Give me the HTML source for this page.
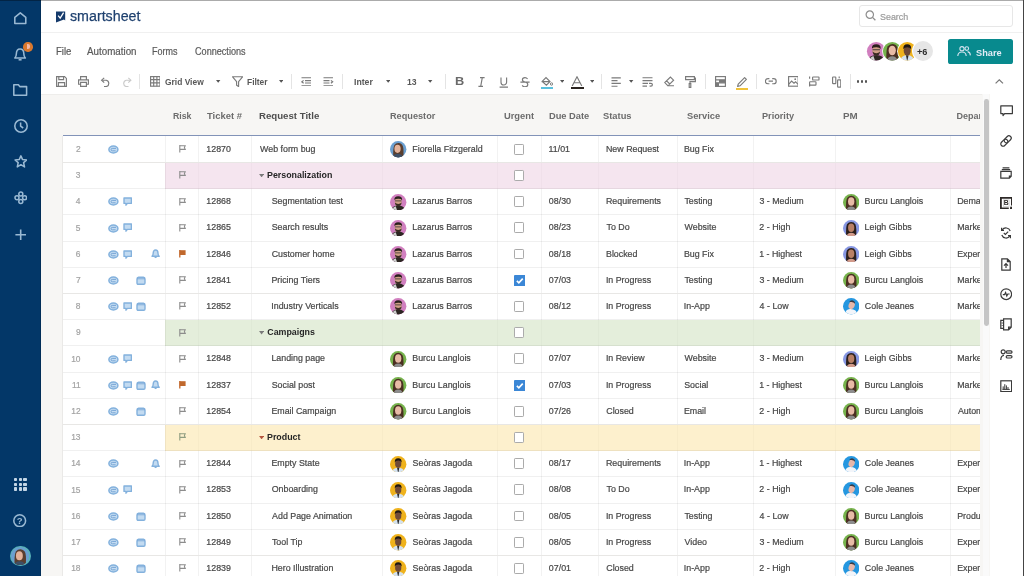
<!DOCTYPE html><html><head><meta charset="utf-8"><title>Smartsheet - Request Tracker</title><style>
html,body{margin:0;padding:0;width:1024px;height:576px;overflow:hidden;background:#fff;font-family:"Liberation Sans", sans-serif;}
.abs{position:absolute}
</style></head><body>
<div style="position:relative;width:1024px;height:576px;overflow:hidden;filter:blur(0.3px)">
<div class="abs" style="left:41px;top:94px;width:983px;height:482px;background:#f7f6f4"></div>
<div class="abs" style="left:41px;top:93.6px;width:941px;height:1.6px;background:#eeedeb"></div>
<div style="position:absolute;left:172.73px;top:111.08px;font-size:9.0px;line-height:10.80px;color:#6c6c6c;font-weight:bold;white-space:nowrap;transform:scaleX(0.9726);transform-origin:0 0;">Risk</div>
<div style="position:absolute;left:206.91px;top:111.08px;font-size:9.0px;line-height:10.80px;color:#6c6c6c;font-weight:bold;white-space:nowrap;transform:scaleX(1.0477);transform-origin:0 0;">Ticket #</div>
<div style="position:absolute;left:259.07px;top:111.08px;font-size:9.0px;line-height:10.80px;color:#4f4f4f;font-weight:bold;white-space:nowrap;transform:scaleX(1.0714);transform-origin:0 0;">Request Title</div>
<div style="position:absolute;left:390.10px;top:111.08px;font-size:9.0px;line-height:10.80px;color:#6c6c6c;font-weight:bold;white-space:nowrap;transform:scaleX(1.0186);transform-origin:0 0;">Requestor</div>
<div style="position:absolute;left:504.34px;top:111.08px;font-size:9.0px;line-height:10.80px;color:#6c6c6c;font-weight:bold;white-space:nowrap;transform:scaleX(1.0370);transform-origin:0 0;">Urgent</div>
<div style="position:absolute;left:548.70px;top:111.08px;font-size:9.0px;line-height:10.80px;color:#6c6c6c;font-weight:bold;white-space:nowrap;transform:scaleX(1.0311);transform-origin:0 0;">Due Date</div>
<div style="position:absolute;left:603.12px;top:111.08px;font-size:9.0px;line-height:10.80px;color:#6c6c6c;font-weight:bold;white-space:nowrap;transform:scaleX(1.0385);transform-origin:0 0;">Status</div>
<div style="position:absolute;left:686.52px;top:111.08px;font-size:9.0px;line-height:10.80px;color:#6c6c6c;font-weight:bold;white-space:nowrap;transform:scaleX(1.0332);transform-origin:0 0;">Service</div>
<div style="position:absolute;left:761.80px;top:111.08px;font-size:9.0px;line-height:10.80px;color:#6c6c6c;font-weight:bold;white-space:nowrap;transform:scaleX(1.0172);transform-origin:0 0;">Priority</div>
<div style="position:absolute;left:843.36px;top:111.08px;font-size:9.0px;line-height:10.80px;color:#6c6c6c;font-weight:bold;white-space:nowrap;transform:scaleX(1.0908);transform-origin:0 0;">PM</div>
<div class="abs" style="left:0;top:0;width:979.80px;height:576px;overflow:hidden">
<div style="position:absolute;left:956.62px;top:111.08px;font-size:9.0px;line-height:10.80px;color:#6c6c6c;font-weight:bold;white-space:nowrap;">Department</div>
<div class="abs" style="left:62.5px;top:134.7px;width:917.30px;height:1.6px;background:#8293b8"></div>
<div class="abs" style="left:62.5px;top:136.30px;width:917.30px;height:26.20px;background:#fff"></div>
<div class="abs" style="left:62.5px;top:162.50px;width:917.30px;height:26.20px;background:#fff"></div>
<div class="abs" style="left:165.20px;top:162.50px;width:814.60px;height:26.20px;background:#f5e5ef"></div>
<div class="abs" style="left:62.5px;top:188.70px;width:917.30px;height:26.20px;background:#fff"></div>
<div class="abs" style="left:62.5px;top:214.90px;width:917.30px;height:26.20px;background:#fff"></div>
<div class="abs" style="left:62.5px;top:241.10px;width:917.30px;height:26.20px;background:#fff"></div>
<div class="abs" style="left:62.5px;top:267.30px;width:917.30px;height:26.20px;background:#fff"></div>
<div class="abs" style="left:62.5px;top:293.50px;width:917.30px;height:26.20px;background:#fff"></div>
<div class="abs" style="left:62.5px;top:319.70px;width:917.30px;height:26.20px;background:#fff"></div>
<div class="abs" style="left:165.20px;top:319.70px;width:814.60px;height:26.20px;background:#e4eedb"></div>
<div class="abs" style="left:62.5px;top:345.90px;width:917.30px;height:26.20px;background:#fff"></div>
<div class="abs" style="left:62.5px;top:372.10px;width:917.30px;height:26.20px;background:#fff"></div>
<div class="abs" style="left:62.5px;top:398.30px;width:917.30px;height:26.20px;background:#fff"></div>
<div class="abs" style="left:62.5px;top:424.50px;width:917.30px;height:26.20px;background:#fff"></div>
<div class="abs" style="left:165.20px;top:424.50px;width:814.60px;height:26.20px;background:#fdf0cd"></div>
<div class="abs" style="left:62.5px;top:450.70px;width:917.30px;height:26.20px;background:#fff"></div>
<div class="abs" style="left:62.5px;top:476.90px;width:917.30px;height:26.20px;background:#fff"></div>
<div class="abs" style="left:62.5px;top:503.10px;width:917.30px;height:26.20px;background:#fff"></div>
<div class="abs" style="left:62.5px;top:529.30px;width:917.30px;height:26.20px;background:#fff"></div>
<div class="abs" style="left:62.5px;top:555.50px;width:917.30px;height:26.20px;background:#fff"></div>
<div class="abs" style="left:62.5px;top:162.00px;width:917.30px;height:1px;background:rgba(0,0,0,0.058)"></div>
<div class="abs" style="left:62.5px;top:188.20px;width:917.30px;height:1px;background:rgba(0,0,0,0.058)"></div>
<div class="abs" style="left:62.5px;top:214.40px;width:917.30px;height:1px;background:rgba(0,0,0,0.058)"></div>
<div class="abs" style="left:62.5px;top:240.60px;width:917.30px;height:1px;background:rgba(0,0,0,0.058)"></div>
<div class="abs" style="left:62.5px;top:266.80px;width:917.30px;height:1px;background:rgba(0,0,0,0.058)"></div>
<div class="abs" style="left:62.5px;top:293.00px;width:917.30px;height:1px;background:rgba(0,0,0,0.058)"></div>
<div class="abs" style="left:62.5px;top:319.20px;width:917.30px;height:1px;background:rgba(0,0,0,0.058)"></div>
<div class="abs" style="left:62.5px;top:345.40px;width:917.30px;height:1px;background:rgba(0,0,0,0.058)"></div>
<div class="abs" style="left:62.5px;top:371.60px;width:917.30px;height:1px;background:rgba(0,0,0,0.058)"></div>
<div class="abs" style="left:62.5px;top:397.80px;width:917.30px;height:1px;background:rgba(0,0,0,0.058)"></div>
<div class="abs" style="left:62.5px;top:424.00px;width:917.30px;height:1px;background:rgba(0,0,0,0.058)"></div>
<div class="abs" style="left:62.5px;top:450.20px;width:917.30px;height:1px;background:rgba(0,0,0,0.058)"></div>
<div class="abs" style="left:62.5px;top:476.40px;width:917.30px;height:1px;background:rgba(0,0,0,0.058)"></div>
<div class="abs" style="left:62.5px;top:502.60px;width:917.30px;height:1px;background:rgba(0,0,0,0.058)"></div>
<div class="abs" style="left:62.5px;top:528.80px;width:917.30px;height:1px;background:rgba(0,0,0,0.058)"></div>
<div class="abs" style="left:62.5px;top:555.00px;width:917.30px;height:1px;background:rgba(0,0,0,0.058)"></div>
<div class="abs" style="left:62.5px;top:581.20px;width:917.30px;height:1px;background:rgba(0,0,0,0.058)"></div>
<div class="abs" style="left:164.70px;top:136.30px;width:1px;height:26.20px;background:rgba(0,0,0,0.052)"></div>
<div class="abs" style="left:164.70px;top:162.50px;width:1px;height:26.20px;background:rgba(0,0,0,0.052)"></div>
<div class="abs" style="left:164.70px;top:188.70px;width:1px;height:26.20px;background:rgba(0,0,0,0.052)"></div>
<div class="abs" style="left:164.70px;top:214.90px;width:1px;height:26.20px;background:rgba(0,0,0,0.052)"></div>
<div class="abs" style="left:164.70px;top:241.10px;width:1px;height:26.20px;background:rgba(0,0,0,0.052)"></div>
<div class="abs" style="left:164.70px;top:267.30px;width:1px;height:26.20px;background:rgba(0,0,0,0.052)"></div>
<div class="abs" style="left:164.70px;top:293.50px;width:1px;height:26.20px;background:rgba(0,0,0,0.052)"></div>
<div class="abs" style="left:164.70px;top:319.70px;width:1px;height:26.20px;background:rgba(0,0,0,0.052)"></div>
<div class="abs" style="left:164.70px;top:345.90px;width:1px;height:26.20px;background:rgba(0,0,0,0.052)"></div>
<div class="abs" style="left:164.70px;top:372.10px;width:1px;height:26.20px;background:rgba(0,0,0,0.052)"></div>
<div class="abs" style="left:164.70px;top:398.30px;width:1px;height:26.20px;background:rgba(0,0,0,0.052)"></div>
<div class="abs" style="left:164.70px;top:424.50px;width:1px;height:26.20px;background:rgba(0,0,0,0.052)"></div>
<div class="abs" style="left:164.70px;top:450.70px;width:1px;height:26.20px;background:rgba(0,0,0,0.052)"></div>
<div class="abs" style="left:164.70px;top:476.90px;width:1px;height:26.20px;background:rgba(0,0,0,0.052)"></div>
<div class="abs" style="left:164.70px;top:503.10px;width:1px;height:26.20px;background:rgba(0,0,0,0.052)"></div>
<div class="abs" style="left:164.70px;top:529.30px;width:1px;height:26.20px;background:rgba(0,0,0,0.052)"></div>
<div class="abs" style="left:164.70px;top:555.50px;width:1px;height:26.20px;background:rgba(0,0,0,0.052)"></div>
<div class="abs" style="left:198.10px;top:136.30px;width:1px;height:26.20px;background:rgba(0,0,0,0.052)"></div>
<div class="abs" style="left:198.10px;top:162.50px;width:1px;height:26.20px;background:rgba(0,0,0,0.018)"></div>
<div class="abs" style="left:198.10px;top:188.70px;width:1px;height:26.20px;background:rgba(0,0,0,0.052)"></div>
<div class="abs" style="left:198.10px;top:214.90px;width:1px;height:26.20px;background:rgba(0,0,0,0.052)"></div>
<div class="abs" style="left:198.10px;top:241.10px;width:1px;height:26.20px;background:rgba(0,0,0,0.052)"></div>
<div class="abs" style="left:198.10px;top:267.30px;width:1px;height:26.20px;background:rgba(0,0,0,0.052)"></div>
<div class="abs" style="left:198.10px;top:293.50px;width:1px;height:26.20px;background:rgba(0,0,0,0.052)"></div>
<div class="abs" style="left:198.10px;top:319.70px;width:1px;height:26.20px;background:rgba(0,0,0,0.018)"></div>
<div class="abs" style="left:198.10px;top:345.90px;width:1px;height:26.20px;background:rgba(0,0,0,0.052)"></div>
<div class="abs" style="left:198.10px;top:372.10px;width:1px;height:26.20px;background:rgba(0,0,0,0.052)"></div>
<div class="abs" style="left:198.10px;top:398.30px;width:1px;height:26.20px;background:rgba(0,0,0,0.052)"></div>
<div class="abs" style="left:198.10px;top:424.50px;width:1px;height:26.20px;background:rgba(0,0,0,0.018)"></div>
<div class="abs" style="left:198.10px;top:450.70px;width:1px;height:26.20px;background:rgba(0,0,0,0.052)"></div>
<div class="abs" style="left:198.10px;top:476.90px;width:1px;height:26.20px;background:rgba(0,0,0,0.052)"></div>
<div class="abs" style="left:198.10px;top:503.10px;width:1px;height:26.20px;background:rgba(0,0,0,0.052)"></div>
<div class="abs" style="left:198.10px;top:529.30px;width:1px;height:26.20px;background:rgba(0,0,0,0.052)"></div>
<div class="abs" style="left:198.10px;top:555.50px;width:1px;height:26.20px;background:rgba(0,0,0,0.052)"></div>
<div class="abs" style="left:250.50px;top:136.30px;width:1px;height:26.20px;background:rgba(0,0,0,0.052)"></div>
<div class="abs" style="left:250.50px;top:162.50px;width:1px;height:26.20px;background:rgba(0,0,0,0.018)"></div>
<div class="abs" style="left:250.50px;top:188.70px;width:1px;height:26.20px;background:rgba(0,0,0,0.052)"></div>
<div class="abs" style="left:250.50px;top:214.90px;width:1px;height:26.20px;background:rgba(0,0,0,0.052)"></div>
<div class="abs" style="left:250.50px;top:241.10px;width:1px;height:26.20px;background:rgba(0,0,0,0.052)"></div>
<div class="abs" style="left:250.50px;top:267.30px;width:1px;height:26.20px;background:rgba(0,0,0,0.052)"></div>
<div class="abs" style="left:250.50px;top:293.50px;width:1px;height:26.20px;background:rgba(0,0,0,0.052)"></div>
<div class="abs" style="left:250.50px;top:319.70px;width:1px;height:26.20px;background:rgba(0,0,0,0.018)"></div>
<div class="abs" style="left:250.50px;top:345.90px;width:1px;height:26.20px;background:rgba(0,0,0,0.052)"></div>
<div class="abs" style="left:250.50px;top:372.10px;width:1px;height:26.20px;background:rgba(0,0,0,0.052)"></div>
<div class="abs" style="left:250.50px;top:398.30px;width:1px;height:26.20px;background:rgba(0,0,0,0.052)"></div>
<div class="abs" style="left:250.50px;top:424.50px;width:1px;height:26.20px;background:rgba(0,0,0,0.018)"></div>
<div class="abs" style="left:250.50px;top:450.70px;width:1px;height:26.20px;background:rgba(0,0,0,0.052)"></div>
<div class="abs" style="left:250.50px;top:476.90px;width:1px;height:26.20px;background:rgba(0,0,0,0.052)"></div>
<div class="abs" style="left:250.50px;top:503.10px;width:1px;height:26.20px;background:rgba(0,0,0,0.052)"></div>
<div class="abs" style="left:250.50px;top:529.30px;width:1px;height:26.20px;background:rgba(0,0,0,0.052)"></div>
<div class="abs" style="left:250.50px;top:555.50px;width:1px;height:26.20px;background:rgba(0,0,0,0.052)"></div>
<div class="abs" style="left:382.20px;top:136.30px;width:1px;height:26.20px;background:rgba(0,0,0,0.052)"></div>
<div class="abs" style="left:382.20px;top:162.50px;width:1px;height:26.20px;background:rgba(0,0,0,0.018)"></div>
<div class="abs" style="left:382.20px;top:188.70px;width:1px;height:26.20px;background:rgba(0,0,0,0.052)"></div>
<div class="abs" style="left:382.20px;top:214.90px;width:1px;height:26.20px;background:rgba(0,0,0,0.052)"></div>
<div class="abs" style="left:382.20px;top:241.10px;width:1px;height:26.20px;background:rgba(0,0,0,0.052)"></div>
<div class="abs" style="left:382.20px;top:267.30px;width:1px;height:26.20px;background:rgba(0,0,0,0.052)"></div>
<div class="abs" style="left:382.20px;top:293.50px;width:1px;height:26.20px;background:rgba(0,0,0,0.052)"></div>
<div class="abs" style="left:382.20px;top:319.70px;width:1px;height:26.20px;background:rgba(0,0,0,0.018)"></div>
<div class="abs" style="left:382.20px;top:345.90px;width:1px;height:26.20px;background:rgba(0,0,0,0.052)"></div>
<div class="abs" style="left:382.20px;top:372.10px;width:1px;height:26.20px;background:rgba(0,0,0,0.052)"></div>
<div class="abs" style="left:382.20px;top:398.30px;width:1px;height:26.20px;background:rgba(0,0,0,0.052)"></div>
<div class="abs" style="left:382.20px;top:424.50px;width:1px;height:26.20px;background:rgba(0,0,0,0.018)"></div>
<div class="abs" style="left:382.20px;top:450.70px;width:1px;height:26.20px;background:rgba(0,0,0,0.052)"></div>
<div class="abs" style="left:382.20px;top:476.90px;width:1px;height:26.20px;background:rgba(0,0,0,0.052)"></div>
<div class="abs" style="left:382.20px;top:503.10px;width:1px;height:26.20px;background:rgba(0,0,0,0.052)"></div>
<div class="abs" style="left:382.20px;top:529.30px;width:1px;height:26.20px;background:rgba(0,0,0,0.052)"></div>
<div class="abs" style="left:382.20px;top:555.50px;width:1px;height:26.20px;background:rgba(0,0,0,0.052)"></div>
<div class="abs" style="left:496.60px;top:136.30px;width:1px;height:26.20px;background:rgba(0,0,0,0.052)"></div>
<div class="abs" style="left:496.60px;top:162.50px;width:1px;height:26.20px;background:rgba(0,0,0,0.018)"></div>
<div class="abs" style="left:496.60px;top:188.70px;width:1px;height:26.20px;background:rgba(0,0,0,0.052)"></div>
<div class="abs" style="left:496.60px;top:214.90px;width:1px;height:26.20px;background:rgba(0,0,0,0.052)"></div>
<div class="abs" style="left:496.60px;top:241.10px;width:1px;height:26.20px;background:rgba(0,0,0,0.052)"></div>
<div class="abs" style="left:496.60px;top:267.30px;width:1px;height:26.20px;background:rgba(0,0,0,0.052)"></div>
<div class="abs" style="left:496.60px;top:293.50px;width:1px;height:26.20px;background:rgba(0,0,0,0.052)"></div>
<div class="abs" style="left:496.60px;top:319.70px;width:1px;height:26.20px;background:rgba(0,0,0,0.018)"></div>
<div class="abs" style="left:496.60px;top:345.90px;width:1px;height:26.20px;background:rgba(0,0,0,0.052)"></div>
<div class="abs" style="left:496.60px;top:372.10px;width:1px;height:26.20px;background:rgba(0,0,0,0.052)"></div>
<div class="abs" style="left:496.60px;top:398.30px;width:1px;height:26.20px;background:rgba(0,0,0,0.052)"></div>
<div class="abs" style="left:496.60px;top:424.50px;width:1px;height:26.20px;background:rgba(0,0,0,0.018)"></div>
<div class="abs" style="left:496.60px;top:450.70px;width:1px;height:26.20px;background:rgba(0,0,0,0.052)"></div>
<div class="abs" style="left:496.60px;top:476.90px;width:1px;height:26.20px;background:rgba(0,0,0,0.052)"></div>
<div class="abs" style="left:496.60px;top:503.10px;width:1px;height:26.20px;background:rgba(0,0,0,0.052)"></div>
<div class="abs" style="left:496.60px;top:529.30px;width:1px;height:26.20px;background:rgba(0,0,0,0.052)"></div>
<div class="abs" style="left:496.60px;top:555.50px;width:1px;height:26.20px;background:rgba(0,0,0,0.052)"></div>
<div class="abs" style="left:541.00px;top:136.30px;width:1px;height:26.20px;background:rgba(0,0,0,0.052)"></div>
<div class="abs" style="left:541.00px;top:162.50px;width:1px;height:26.20px;background:rgba(0,0,0,0.018)"></div>
<div class="abs" style="left:541.00px;top:188.70px;width:1px;height:26.20px;background:rgba(0,0,0,0.052)"></div>
<div class="abs" style="left:541.00px;top:214.90px;width:1px;height:26.20px;background:rgba(0,0,0,0.052)"></div>
<div class="abs" style="left:541.00px;top:241.10px;width:1px;height:26.20px;background:rgba(0,0,0,0.052)"></div>
<div class="abs" style="left:541.00px;top:267.30px;width:1px;height:26.20px;background:rgba(0,0,0,0.052)"></div>
<div class="abs" style="left:541.00px;top:293.50px;width:1px;height:26.20px;background:rgba(0,0,0,0.052)"></div>
<div class="abs" style="left:541.00px;top:319.70px;width:1px;height:26.20px;background:rgba(0,0,0,0.018)"></div>
<div class="abs" style="left:541.00px;top:345.90px;width:1px;height:26.20px;background:rgba(0,0,0,0.052)"></div>
<div class="abs" style="left:541.00px;top:372.10px;width:1px;height:26.20px;background:rgba(0,0,0,0.052)"></div>
<div class="abs" style="left:541.00px;top:398.30px;width:1px;height:26.20px;background:rgba(0,0,0,0.052)"></div>
<div class="abs" style="left:541.00px;top:424.50px;width:1px;height:26.20px;background:rgba(0,0,0,0.018)"></div>
<div class="abs" style="left:541.00px;top:450.70px;width:1px;height:26.20px;background:rgba(0,0,0,0.052)"></div>
<div class="abs" style="left:541.00px;top:476.90px;width:1px;height:26.20px;background:rgba(0,0,0,0.052)"></div>
<div class="abs" style="left:541.00px;top:503.10px;width:1px;height:26.20px;background:rgba(0,0,0,0.052)"></div>
<div class="abs" style="left:541.00px;top:529.30px;width:1px;height:26.20px;background:rgba(0,0,0,0.052)"></div>
<div class="abs" style="left:541.00px;top:555.50px;width:1px;height:26.20px;background:rgba(0,0,0,0.052)"></div>
<div class="abs" style="left:598.10px;top:136.30px;width:1px;height:26.20px;background:rgba(0,0,0,0.052)"></div>
<div class="abs" style="left:598.10px;top:162.50px;width:1px;height:26.20px;background:rgba(0,0,0,0.018)"></div>
<div class="abs" style="left:598.10px;top:188.70px;width:1px;height:26.20px;background:rgba(0,0,0,0.052)"></div>
<div class="abs" style="left:598.10px;top:214.90px;width:1px;height:26.20px;background:rgba(0,0,0,0.052)"></div>
<div class="abs" style="left:598.10px;top:241.10px;width:1px;height:26.20px;background:rgba(0,0,0,0.052)"></div>
<div class="abs" style="left:598.10px;top:267.30px;width:1px;height:26.20px;background:rgba(0,0,0,0.052)"></div>
<div class="abs" style="left:598.10px;top:293.50px;width:1px;height:26.20px;background:rgba(0,0,0,0.052)"></div>
<div class="abs" style="left:598.10px;top:319.70px;width:1px;height:26.20px;background:rgba(0,0,0,0.018)"></div>
<div class="abs" style="left:598.10px;top:345.90px;width:1px;height:26.20px;background:rgba(0,0,0,0.052)"></div>
<div class="abs" style="left:598.10px;top:372.10px;width:1px;height:26.20px;background:rgba(0,0,0,0.052)"></div>
<div class="abs" style="left:598.10px;top:398.30px;width:1px;height:26.20px;background:rgba(0,0,0,0.052)"></div>
<div class="abs" style="left:598.10px;top:424.50px;width:1px;height:26.20px;background:rgba(0,0,0,0.018)"></div>
<div class="abs" style="left:598.10px;top:450.70px;width:1px;height:26.20px;background:rgba(0,0,0,0.052)"></div>
<div class="abs" style="left:598.10px;top:476.90px;width:1px;height:26.20px;background:rgba(0,0,0,0.052)"></div>
<div class="abs" style="left:598.10px;top:503.10px;width:1px;height:26.20px;background:rgba(0,0,0,0.052)"></div>
<div class="abs" style="left:598.10px;top:529.30px;width:1px;height:26.20px;background:rgba(0,0,0,0.052)"></div>
<div class="abs" style="left:598.10px;top:555.50px;width:1px;height:26.20px;background:rgba(0,0,0,0.052)"></div>
<div class="abs" style="left:676.70px;top:136.30px;width:1px;height:26.20px;background:rgba(0,0,0,0.052)"></div>
<div class="abs" style="left:676.70px;top:162.50px;width:1px;height:26.20px;background:rgba(0,0,0,0.018)"></div>
<div class="abs" style="left:676.70px;top:188.70px;width:1px;height:26.20px;background:rgba(0,0,0,0.052)"></div>
<div class="abs" style="left:676.70px;top:214.90px;width:1px;height:26.20px;background:rgba(0,0,0,0.052)"></div>
<div class="abs" style="left:676.70px;top:241.10px;width:1px;height:26.20px;background:rgba(0,0,0,0.052)"></div>
<div class="abs" style="left:676.70px;top:267.30px;width:1px;height:26.20px;background:rgba(0,0,0,0.052)"></div>
<div class="abs" style="left:676.70px;top:293.50px;width:1px;height:26.20px;background:rgba(0,0,0,0.052)"></div>
<div class="abs" style="left:676.70px;top:319.70px;width:1px;height:26.20px;background:rgba(0,0,0,0.018)"></div>
<div class="abs" style="left:676.70px;top:345.90px;width:1px;height:26.20px;background:rgba(0,0,0,0.052)"></div>
<div class="abs" style="left:676.70px;top:372.10px;width:1px;height:26.20px;background:rgba(0,0,0,0.052)"></div>
<div class="abs" style="left:676.70px;top:398.30px;width:1px;height:26.20px;background:rgba(0,0,0,0.052)"></div>
<div class="abs" style="left:676.70px;top:424.50px;width:1px;height:26.20px;background:rgba(0,0,0,0.018)"></div>
<div class="abs" style="left:676.70px;top:450.70px;width:1px;height:26.20px;background:rgba(0,0,0,0.052)"></div>
<div class="abs" style="left:676.70px;top:476.90px;width:1px;height:26.20px;background:rgba(0,0,0,0.052)"></div>
<div class="abs" style="left:676.70px;top:503.10px;width:1px;height:26.20px;background:rgba(0,0,0,0.052)"></div>
<div class="abs" style="left:676.70px;top:529.30px;width:1px;height:26.20px;background:rgba(0,0,0,0.052)"></div>
<div class="abs" style="left:676.70px;top:555.50px;width:1px;height:26.20px;background:rgba(0,0,0,0.052)"></div>
<div class="abs" style="left:752.70px;top:136.30px;width:1px;height:26.20px;background:rgba(0,0,0,0.052)"></div>
<div class="abs" style="left:752.70px;top:162.50px;width:1px;height:26.20px;background:rgba(0,0,0,0.018)"></div>
<div class="abs" style="left:752.70px;top:188.70px;width:1px;height:26.20px;background:rgba(0,0,0,0.052)"></div>
<div class="abs" style="left:752.70px;top:214.90px;width:1px;height:26.20px;background:rgba(0,0,0,0.052)"></div>
<div class="abs" style="left:752.70px;top:241.10px;width:1px;height:26.20px;background:rgba(0,0,0,0.052)"></div>
<div class="abs" style="left:752.70px;top:267.30px;width:1px;height:26.20px;background:rgba(0,0,0,0.052)"></div>
<div class="abs" style="left:752.70px;top:293.50px;width:1px;height:26.20px;background:rgba(0,0,0,0.052)"></div>
<div class="abs" style="left:752.70px;top:319.70px;width:1px;height:26.20px;background:rgba(0,0,0,0.018)"></div>
<div class="abs" style="left:752.70px;top:345.90px;width:1px;height:26.20px;background:rgba(0,0,0,0.052)"></div>
<div class="abs" style="left:752.70px;top:372.10px;width:1px;height:26.20px;background:rgba(0,0,0,0.052)"></div>
<div class="abs" style="left:752.70px;top:398.30px;width:1px;height:26.20px;background:rgba(0,0,0,0.052)"></div>
<div class="abs" style="left:752.70px;top:424.50px;width:1px;height:26.20px;background:rgba(0,0,0,0.018)"></div>
<div class="abs" style="left:752.70px;top:450.70px;width:1px;height:26.20px;background:rgba(0,0,0,0.052)"></div>
<div class="abs" style="left:752.70px;top:476.90px;width:1px;height:26.20px;background:rgba(0,0,0,0.052)"></div>
<div class="abs" style="left:752.70px;top:503.10px;width:1px;height:26.20px;background:rgba(0,0,0,0.052)"></div>
<div class="abs" style="left:752.70px;top:529.30px;width:1px;height:26.20px;background:rgba(0,0,0,0.052)"></div>
<div class="abs" style="left:752.70px;top:555.50px;width:1px;height:26.20px;background:rgba(0,0,0,0.052)"></div>
<div class="abs" style="left:835.00px;top:136.30px;width:1px;height:26.20px;background:rgba(0,0,0,0.052)"></div>
<div class="abs" style="left:835.00px;top:162.50px;width:1px;height:26.20px;background:rgba(0,0,0,0.018)"></div>
<div class="abs" style="left:835.00px;top:188.70px;width:1px;height:26.20px;background:rgba(0,0,0,0.052)"></div>
<div class="abs" style="left:835.00px;top:214.90px;width:1px;height:26.20px;background:rgba(0,0,0,0.052)"></div>
<div class="abs" style="left:835.00px;top:241.10px;width:1px;height:26.20px;background:rgba(0,0,0,0.052)"></div>
<div class="abs" style="left:835.00px;top:267.30px;width:1px;height:26.20px;background:rgba(0,0,0,0.052)"></div>
<div class="abs" style="left:835.00px;top:293.50px;width:1px;height:26.20px;background:rgba(0,0,0,0.052)"></div>
<div class="abs" style="left:835.00px;top:319.70px;width:1px;height:26.20px;background:rgba(0,0,0,0.018)"></div>
<div class="abs" style="left:835.00px;top:345.90px;width:1px;height:26.20px;background:rgba(0,0,0,0.052)"></div>
<div class="abs" style="left:835.00px;top:372.10px;width:1px;height:26.20px;background:rgba(0,0,0,0.052)"></div>
<div class="abs" style="left:835.00px;top:398.30px;width:1px;height:26.20px;background:rgba(0,0,0,0.052)"></div>
<div class="abs" style="left:835.00px;top:424.50px;width:1px;height:26.20px;background:rgba(0,0,0,0.018)"></div>
<div class="abs" style="left:835.00px;top:450.70px;width:1px;height:26.20px;background:rgba(0,0,0,0.052)"></div>
<div class="abs" style="left:835.00px;top:476.90px;width:1px;height:26.20px;background:rgba(0,0,0,0.052)"></div>
<div class="abs" style="left:835.00px;top:503.10px;width:1px;height:26.20px;background:rgba(0,0,0,0.052)"></div>
<div class="abs" style="left:835.00px;top:529.30px;width:1px;height:26.20px;background:rgba(0,0,0,0.052)"></div>
<div class="abs" style="left:835.00px;top:555.50px;width:1px;height:26.20px;background:rgba(0,0,0,0.052)"></div>
<div class="abs" style="left:950.20px;top:136.30px;width:1px;height:26.20px;background:rgba(0,0,0,0.052)"></div>
<div class="abs" style="left:950.20px;top:162.50px;width:1px;height:26.20px;background:rgba(0,0,0,0.018)"></div>
<div class="abs" style="left:950.20px;top:188.70px;width:1px;height:26.20px;background:rgba(0,0,0,0.052)"></div>
<div class="abs" style="left:950.20px;top:214.90px;width:1px;height:26.20px;background:rgba(0,0,0,0.052)"></div>
<div class="abs" style="left:950.20px;top:241.10px;width:1px;height:26.20px;background:rgba(0,0,0,0.052)"></div>
<div class="abs" style="left:950.20px;top:267.30px;width:1px;height:26.20px;background:rgba(0,0,0,0.052)"></div>
<div class="abs" style="left:950.20px;top:293.50px;width:1px;height:26.20px;background:rgba(0,0,0,0.052)"></div>
<div class="abs" style="left:950.20px;top:319.70px;width:1px;height:26.20px;background:rgba(0,0,0,0.018)"></div>
<div class="abs" style="left:950.20px;top:345.90px;width:1px;height:26.20px;background:rgba(0,0,0,0.052)"></div>
<div class="abs" style="left:950.20px;top:372.10px;width:1px;height:26.20px;background:rgba(0,0,0,0.052)"></div>
<div class="abs" style="left:950.20px;top:398.30px;width:1px;height:26.20px;background:rgba(0,0,0,0.052)"></div>
<div class="abs" style="left:950.20px;top:424.50px;width:1px;height:26.20px;background:rgba(0,0,0,0.018)"></div>
<div class="abs" style="left:950.20px;top:450.70px;width:1px;height:26.20px;background:rgba(0,0,0,0.052)"></div>
<div class="abs" style="left:950.20px;top:476.90px;width:1px;height:26.20px;background:rgba(0,0,0,0.052)"></div>
<div class="abs" style="left:950.20px;top:503.10px;width:1px;height:26.20px;background:rgba(0,0,0,0.052)"></div>
<div class="abs" style="left:950.20px;top:529.30px;width:1px;height:26.20px;background:rgba(0,0,0,0.052)"></div>
<div class="abs" style="left:950.20px;top:555.50px;width:1px;height:26.20px;background:rgba(0,0,0,0.052)"></div>
<div class="abs" style="left:62.00px;top:136.30px;width:1px;height:439.70px;background:rgba(0,0,0,0.05)"></div>
<div style="position:absolute;left:75.96px;top:143.95px;font-size:8.4px;line-height:10.08px;color:#a3a3a3;font-weight:normal;white-space:nowrap;-webkit-text-stroke:0.2px #a3a3a3;">2</div>
<svg style="position:absolute;left:107.60px;top:144.90px" width="11" height="9" viewBox="0 0 11 9"><ellipse cx="5.4" cy="4.5" rx="4.5" ry="3.4" fill="#c3dbf1" stroke="#83b1dd" stroke-width="1.5"/><path d="M8 3.4 H4.2 Q3.1 3.4 3.1 4.5 Q3.1 5.8 4.4 5.8 H7.6" fill="none" stroke="#6e9fd2" stroke-width="0.9"/></svg>
<svg style="position:absolute;left:179.30px;top:145.20px" width="7" height="8" viewBox="0 0 7 8"><path d="M0.8 0 V7.6 M0.8 0.8 H6.2 L5.4 2.6 L6.2 4.4 H0.8" fill="none" stroke="#8c8c8c" stroke-width="1.1"/></svg>
<div style="position:absolute;left:206.34px;top:143.72px;font-size:8.85px;line-height:10.62px;color:#474747;font-weight:normal;white-space:nowrap;-webkit-text-stroke:0.2px #474747;">12870</div>
<div style="position:absolute;left:260.06px;top:143.72px;font-size:8.85px;line-height:10.62px;color:#474747;font-weight:normal;white-space:nowrap;-webkit-text-stroke:0.2px #474747;">Web form bug</div>
<svg style="position:absolute;left:390.20px;top:141.20px" width="16.40" height="16.40" viewBox="0 0 20 20"><defs><clipPath id="av1"><circle cx="10" cy="10" r="10"/></clipPath></defs><circle cx="10" cy="10" r="10" fill="#6a9fd0"/><g clip-path="url(#av1)"><path d="M4 20 Q3.4 9 5.4 5 Q7.4 2.2 10.6 2.4 Q14.6 2.8 15.8 6.6 Q17 11 16.2 20 Z" fill="#5a3e2e"/><path d="M3 21 Q4 15.6 9.6 15.6 Q15 15.6 16 21 Z" fill="#3d4f66"/><ellipse cx="9.2" cy="9.6" rx="3.8" ry="5" fill="#e3b29a"/></g></svg>
<div style="position:absolute;left:412.29px;top:143.72px;font-size:8.85px;line-height:10.62px;color:#474747;font-weight:normal;white-space:nowrap;-webkit-text-stroke:0.2px #474747;">Fiorella Fitzgerald</div>
<div style="position:absolute;left:513.50px;top:143.70px;width:8.9px;height:8.9px;border:1.25px solid #ababab;border-radius:1.2px;background:#fff"></div>
<div style="position:absolute;left:548.54px;top:143.72px;font-size:8.85px;line-height:10.62px;color:#474747;font-weight:normal;white-space:nowrap;-webkit-text-stroke:0.2px #474747;">11/01</div>
<div style="position:absolute;left:605.99px;top:143.72px;font-size:8.85px;line-height:10.62px;color:#474747;font-weight:normal;white-space:nowrap;-webkit-text-stroke:0.2px #474747;">New Request</div>
<div style="position:absolute;left:683.89px;top:143.72px;font-size:8.85px;line-height:10.62px;color:#474747;font-weight:normal;white-space:nowrap;-webkit-text-stroke:0.2px #474747;">Bug Fix</div>
<div style="position:absolute;left:75.87px;top:170.15px;font-size:8.4px;line-height:10.08px;color:#a3a3a3;font-weight:normal;white-space:nowrap;-webkit-text-stroke:0.2px #a3a3a3;">3</div>
<svg style="position:absolute;left:179.30px;top:171.40px" width="7" height="8" viewBox="0 0 7 8"><path d="M0.8 0 V7.6 M0.8 0.8 H6.2 L5.4 2.6 L6.2 4.4 H0.8" fill="none" stroke="#8c8c8c" stroke-width="1.1"/></svg>
<svg class="abs" style="left:259.3px;top:174.00px" width="5.2" height="3.4" viewBox="0 0 6 4"><path d="M0 0 H6 L3 4 Z" fill="#7a7a7a"/></svg>
<div style="position:absolute;left:267.02px;top:169.92px;font-size:8.85px;line-height:10.62px;color:#262626;font-weight:bold;white-space:nowrap;">Personalization</div>
<div style="position:absolute;left:513.50px;top:169.90px;width:8.9px;height:8.9px;border:1.25px solid #ababab;border-radius:1.2px;background:#fff"></div>
<div style="position:absolute;left:75.79px;top:196.35px;font-size:8.4px;line-height:10.08px;color:#a3a3a3;font-weight:normal;white-space:nowrap;-webkit-text-stroke:0.2px #a3a3a3;">4</div>
<svg style="position:absolute;left:107.60px;top:197.30px" width="11" height="9" viewBox="0 0 11 9"><ellipse cx="5.4" cy="4.5" rx="4.5" ry="3.4" fill="#c3dbf1" stroke="#83b1dd" stroke-width="1.5"/><path d="M8 3.4 H4.2 Q3.1 3.4 3.1 4.5 Q3.1 5.8 4.4 5.8 H7.6" fill="none" stroke="#6e9fd2" stroke-width="0.9"/></svg>
<svg style="position:absolute;left:122.50px;top:197.20px" width="9.4" height="9.2" viewBox="0 0 9.4 9.2"><path d="M1 1 H8.4 V6.4 H4.4 L3 8.2 V6.4 H1 Z" fill="#c3dbf1" stroke="#83b1dd" stroke-width="1.4" stroke-linejoin="round"/></svg>
<svg style="position:absolute;left:179.30px;top:197.60px" width="7" height="8" viewBox="0 0 7 8"><path d="M0.8 0 V7.6 M0.8 0.8 H6.2 L5.4 2.6 L6.2 4.4 H0.8" fill="none" stroke="#8c8c8c" stroke-width="1.1"/></svg>
<div style="position:absolute;left:206.34px;top:196.12px;font-size:8.85px;line-height:10.62px;color:#474747;font-weight:normal;white-space:nowrap;-webkit-text-stroke:0.2px #474747;">12868</div>
<div style="position:absolute;left:271.70px;top:196.12px;font-size:8.85px;line-height:10.62px;color:#474747;font-weight:normal;white-space:nowrap;-webkit-text-stroke:0.2px #474747;">Segmentation test</div>
<svg style="position:absolute;left:390.20px;top:193.60px" width="16.40" height="16.40" viewBox="0 0 20 20"><defs><clipPath id="av2"><circle cx="10" cy="10" r="10"/></clipPath></defs><circle cx="10" cy="10" r="10" fill="#d17fbf"/><g clip-path="url(#av2)"><path d="M1 21 Q2 14 10 14 Q18 14 19 21 Z" fill="#2c2622"/><path d="M2 21 Q3 16 7 15 L9 21 Z" fill="#cfcfcf"/><ellipse cx="10" cy="9.4" rx="4.2" ry="5.2" fill="#cf9f86"/><path d="M5.4 7.2 Q5 2.6 10 2.6 Q15.2 2.6 14.8 7.6 Q13.4 5.6 10 5.8 Q6.8 5.8 5.4 7.2 Z" fill="#2a201c"/><path d="M6 10.4 Q6.6 15 10 15 Q13.6 15 14.2 10.4 Q12.6 12.2 10 12.2 Q7.6 12.2 6 10.4 Z" fill="#3a2c24"/><path d="M6 8.4 H14" stroke="#2a2a2a" stroke-width="0.9"/></g></svg>
<div style="position:absolute;left:412.29px;top:196.12px;font-size:8.85px;line-height:10.62px;color:#474747;font-weight:normal;white-space:nowrap;-webkit-text-stroke:0.2px #474747;">Lazarus Barros</div>
<div style="position:absolute;left:513.50px;top:196.10px;width:8.9px;height:8.9px;border:1.25px solid #ababab;border-radius:1.2px;background:#fff"></div>
<div style="position:absolute;left:548.85px;top:196.12px;font-size:8.85px;line-height:10.62px;color:#474747;font-weight:normal;white-space:nowrap;-webkit-text-stroke:0.2px #474747;">08/30</div>
<div style="position:absolute;left:605.99px;top:196.12px;font-size:8.85px;line-height:10.62px;color:#474747;font-weight:normal;white-space:nowrap;-webkit-text-stroke:0.2px #474747;">Requirements</div>
<div style="position:absolute;left:684.42px;top:196.12px;font-size:8.85px;line-height:10.62px;color:#474747;font-weight:normal;white-space:nowrap;-webkit-text-stroke:0.2px #474747;">Testing</div>
<div style="position:absolute;left:759.45px;top:196.12px;font-size:8.85px;line-height:10.62px;color:#474747;font-weight:normal;white-space:nowrap;-webkit-text-stroke:0.2px #474747;">3 - Medium</div>
<svg style="position:absolute;left:842.60px;top:193.60px" width="16.40" height="16.40" viewBox="0 0 20 20"><defs><clipPath id="av3"><circle cx="10" cy="10" r="10"/></clipPath></defs><circle cx="10" cy="10" r="10" fill="#76b24c"/><g clip-path="url(#av3)"><path d="M3.6 20 Q3.4 8 5 5 Q7 2.2 10.2 2.2 Q13.8 2.2 15.4 5.6 Q16.8 9 16.4 20 Z" fill="#4b2f22"/><path d="M4 21 Q5 15.4 10 15.4 Q15 15.4 16 21 Z" fill="#8d8d8d"/><ellipse cx="10" cy="9.2" rx="3.9" ry="5.2" fill="#e8bba6"/></g></svg>
<div style="position:absolute;left:864.59px;top:196.12px;font-size:8.85px;line-height:10.62px;color:#474747;font-weight:normal;white-space:nowrap;-webkit-text-stroke:0.2px #474747;">Burcu Langlois</div>
<div style="position:absolute;left:957.19px;top:196.12px;font-size:8.85px;line-height:10.62px;color:#474747;font-weight:normal;white-space:nowrap;-webkit-text-stroke:0.2px #474747;">Demand Gen</div>
<div style="position:absolute;left:75.87px;top:222.55px;font-size:8.4px;line-height:10.08px;color:#a3a3a3;font-weight:normal;white-space:nowrap;-webkit-text-stroke:0.2px #a3a3a3;">5</div>
<svg style="position:absolute;left:107.60px;top:223.50px" width="11" height="9" viewBox="0 0 11 9"><ellipse cx="5.4" cy="4.5" rx="4.5" ry="3.4" fill="#c3dbf1" stroke="#83b1dd" stroke-width="1.5"/><path d="M8 3.4 H4.2 Q3.1 3.4 3.1 4.5 Q3.1 5.8 4.4 5.8 H7.6" fill="none" stroke="#6e9fd2" stroke-width="0.9"/></svg>
<svg style="position:absolute;left:122.50px;top:223.40px" width="9.4" height="9.2" viewBox="0 0 9.4 9.2"><path d="M1 1 H8.4 V6.4 H4.4 L3 8.2 V6.4 H1 Z" fill="#c3dbf1" stroke="#83b1dd" stroke-width="1.4" stroke-linejoin="round"/></svg>
<svg style="position:absolute;left:179.30px;top:223.80px" width="7" height="8" viewBox="0 0 7 8"><path d="M0.8 0 V7.6 M0.8 0.8 H6.2 L5.4 2.6 L6.2 4.4 H0.8" fill="none" stroke="#8c8c8c" stroke-width="1.1"/></svg>
<div style="position:absolute;left:206.34px;top:222.32px;font-size:8.85px;line-height:10.62px;color:#474747;font-weight:normal;white-space:nowrap;-webkit-text-stroke:0.2px #474747;">12865</div>
<div style="position:absolute;left:271.70px;top:222.32px;font-size:8.85px;line-height:10.62px;color:#474747;font-weight:normal;white-space:nowrap;-webkit-text-stroke:0.2px #474747;">Search results</div>
<svg style="position:absolute;left:390.20px;top:219.80px" width="16.40" height="16.40" viewBox="0 0 20 20"><defs><clipPath id="av4"><circle cx="10" cy="10" r="10"/></clipPath></defs><circle cx="10" cy="10" r="10" fill="#d17fbf"/><g clip-path="url(#av4)"><path d="M1 21 Q2 14 10 14 Q18 14 19 21 Z" fill="#2c2622"/><path d="M2 21 Q3 16 7 15 L9 21 Z" fill="#cfcfcf"/><ellipse cx="10" cy="9.4" rx="4.2" ry="5.2" fill="#cf9f86"/><path d="M5.4 7.2 Q5 2.6 10 2.6 Q15.2 2.6 14.8 7.6 Q13.4 5.6 10 5.8 Q6.8 5.8 5.4 7.2 Z" fill="#2a201c"/><path d="M6 10.4 Q6.6 15 10 15 Q13.6 15 14.2 10.4 Q12.6 12.2 10 12.2 Q7.6 12.2 6 10.4 Z" fill="#3a2c24"/><path d="M6 8.4 H14" stroke="#2a2a2a" stroke-width="0.9"/></g></svg>
<div style="position:absolute;left:412.29px;top:222.32px;font-size:8.85px;line-height:10.62px;color:#474747;font-weight:normal;white-space:nowrap;-webkit-text-stroke:0.2px #474747;">Lazarus Barros</div>
<div style="position:absolute;left:513.50px;top:222.30px;width:8.9px;height:8.9px;border:1.25px solid #ababab;border-radius:1.2px;background:#fff"></div>
<div style="position:absolute;left:548.85px;top:222.32px;font-size:8.85px;line-height:10.62px;color:#474747;font-weight:normal;white-space:nowrap;-webkit-text-stroke:0.2px #474747;">08/23</div>
<div style="position:absolute;left:606.52px;top:222.32px;font-size:8.85px;line-height:10.62px;color:#474747;font-weight:normal;white-space:nowrap;-webkit-text-stroke:0.2px #474747;">To Do</div>
<div style="position:absolute;left:684.56px;top:222.32px;font-size:8.85px;line-height:10.62px;color:#474747;font-weight:normal;white-space:nowrap;-webkit-text-stroke:0.2px #474747;">Website</div>
<div style="position:absolute;left:759.36px;top:222.32px;font-size:8.85px;line-height:10.62px;color:#474747;font-weight:normal;white-space:nowrap;-webkit-text-stroke:0.2px #474747;">2 - High</div>
<svg style="position:absolute;left:842.60px;top:219.80px" width="16.40" height="16.40" viewBox="0 0 20 20"><defs><clipPath id="av5"><circle cx="10" cy="10" r="10"/></clipPath></defs><circle cx="10" cy="10" r="10" fill="#8797e2"/><g clip-path="url(#av5)"><path d="M3.8 19 Q3.4 8 5 5 Q7 2.4 10 2.4 Q13.6 2.4 15.2 5.4 Q16.6 9 16.2 19 Z" fill="#2b1f1b"/><path d="M4 21 Q5 15.6 10 15.6 Q15 15.6 16 21 Z" fill="#d29a8a"/><ellipse cx="10" cy="9.4" rx="3.8" ry="5.1" fill="#b98066"/></g></svg>
<div style="position:absolute;left:864.59px;top:222.32px;font-size:8.85px;line-height:10.62px;color:#474747;font-weight:normal;white-space:nowrap;-webkit-text-stroke:0.2px #474747;">Leigh Gibbs</div>
<div style="position:absolute;left:957.19px;top:222.32px;font-size:8.85px;line-height:10.62px;color:#474747;font-weight:normal;white-space:nowrap;-webkit-text-stroke:0.2px #474747;">Marketing</div>
<div style="position:absolute;left:75.87px;top:248.75px;font-size:8.4px;line-height:10.08px;color:#a3a3a3;font-weight:normal;white-space:nowrap;-webkit-text-stroke:0.2px #a3a3a3;">6</div>
<svg style="position:absolute;left:107.60px;top:249.70px" width="11" height="9" viewBox="0 0 11 9"><ellipse cx="5.4" cy="4.5" rx="4.5" ry="3.4" fill="#c3dbf1" stroke="#83b1dd" stroke-width="1.5"/><path d="M8 3.4 H4.2 Q3.1 3.4 3.1 4.5 Q3.1 5.8 4.4 5.8 H7.6" fill="none" stroke="#6e9fd2" stroke-width="0.9"/></svg>
<svg style="position:absolute;left:122.50px;top:249.60px" width="9.4" height="9.2" viewBox="0 0 9.4 9.2"><path d="M1 1 H8.4 V6.4 H4.4 L3 8.2 V6.4 H1 Z" fill="#c3dbf1" stroke="#83b1dd" stroke-width="1.4" stroke-linejoin="round"/></svg>
<svg style="position:absolute;left:150.90px;top:249.40px" width="9.2" height="9.6" viewBox="0 0 9.2 9.6"><path d="M1 7.2 Q2.2 6.2 2.2 4.2 Q2.2 1 4.6 1 Q7 1 7 4.2 Q7 6.2 8.2 7.2 Z" fill="#c3dbf1" stroke="#83b1dd" stroke-width="1.4" stroke-linejoin="round"/><path d="M3.6 8.4 H5.6" stroke="#83b1dd" stroke-width="1.3"/></svg>
<svg style="position:absolute;left:179.30px;top:250.00px" width="7" height="8" viewBox="0 0 7 8"><path d="M0.8 0 V7.6" stroke="#c2672b" stroke-width="1.3"/><path d="M0.8 0.2 H6.6 V5 H0.8 Z" fill="#c0682c"/></svg>
<div style="position:absolute;left:206.34px;top:248.52px;font-size:8.85px;line-height:10.62px;color:#474747;font-weight:normal;white-space:nowrap;-webkit-text-stroke:0.2px #474747;">12846</div>
<div style="position:absolute;left:271.66px;top:248.52px;font-size:8.85px;line-height:10.62px;color:#474747;font-weight:normal;white-space:nowrap;-webkit-text-stroke:0.2px #474747;">Customer home</div>
<svg style="position:absolute;left:390.20px;top:246.00px" width="16.40" height="16.40" viewBox="0 0 20 20"><defs><clipPath id="av6"><circle cx="10" cy="10" r="10"/></clipPath></defs><circle cx="10" cy="10" r="10" fill="#d17fbf"/><g clip-path="url(#av6)"><path d="M1 21 Q2 14 10 14 Q18 14 19 21 Z" fill="#2c2622"/><path d="M2 21 Q3 16 7 15 L9 21 Z" fill="#cfcfcf"/><ellipse cx="10" cy="9.4" rx="4.2" ry="5.2" fill="#cf9f86"/><path d="M5.4 7.2 Q5 2.6 10 2.6 Q15.2 2.6 14.8 7.6 Q13.4 5.6 10 5.8 Q6.8 5.8 5.4 7.2 Z" fill="#2a201c"/><path d="M6 10.4 Q6.6 15 10 15 Q13.6 15 14.2 10.4 Q12.6 12.2 10 12.2 Q7.6 12.2 6 10.4 Z" fill="#3a2c24"/><path d="M6 8.4 H14" stroke="#2a2a2a" stroke-width="0.9"/></g></svg>
<div style="position:absolute;left:412.29px;top:248.52px;font-size:8.85px;line-height:10.62px;color:#474747;font-weight:normal;white-space:nowrap;-webkit-text-stroke:0.2px #474747;">Lazarus Barros</div>
<div style="position:absolute;left:513.50px;top:248.50px;width:8.9px;height:8.9px;border:1.25px solid #ababab;border-radius:1.2px;background:#fff"></div>
<div style="position:absolute;left:548.85px;top:248.52px;font-size:8.85px;line-height:10.62px;color:#474747;font-weight:normal;white-space:nowrap;-webkit-text-stroke:0.2px #474747;">08/18</div>
<div style="position:absolute;left:605.99px;top:248.52px;font-size:8.85px;line-height:10.62px;color:#474747;font-weight:normal;white-space:nowrap;-webkit-text-stroke:0.2px #474747;">Blocked</div>
<div style="position:absolute;left:683.89px;top:248.52px;font-size:8.85px;line-height:10.62px;color:#474747;font-weight:normal;white-space:nowrap;-webkit-text-stroke:0.2px #474747;">Bug Fix</div>
<div style="position:absolute;left:759.14px;top:248.52px;font-size:8.85px;line-height:10.62px;color:#474747;font-weight:normal;white-space:nowrap;-webkit-text-stroke:0.2px #474747;">1 - Highest</div>
<svg style="position:absolute;left:842.60px;top:246.00px" width="16.40" height="16.40" viewBox="0 0 20 20"><defs><clipPath id="av7"><circle cx="10" cy="10" r="10"/></clipPath></defs><circle cx="10" cy="10" r="10" fill="#8797e2"/><g clip-path="url(#av7)"><path d="M3.8 19 Q3.4 8 5 5 Q7 2.4 10 2.4 Q13.6 2.4 15.2 5.4 Q16.6 9 16.2 19 Z" fill="#2b1f1b"/><path d="M4 21 Q5 15.6 10 15.6 Q15 15.6 16 21 Z" fill="#d29a8a"/><ellipse cx="10" cy="9.4" rx="3.8" ry="5.1" fill="#b98066"/></g></svg>
<div style="position:absolute;left:864.59px;top:248.52px;font-size:8.85px;line-height:10.62px;color:#474747;font-weight:normal;white-space:nowrap;-webkit-text-stroke:0.2px #474747;">Leigh Gibbs</div>
<div style="position:absolute;left:957.19px;top:248.52px;font-size:8.85px;line-height:10.62px;color:#474747;font-weight:normal;white-space:nowrap;-webkit-text-stroke:0.2px #474747;">Experience</div>
<div style="position:absolute;left:75.96px;top:274.95px;font-size:8.4px;line-height:10.08px;color:#a3a3a3;font-weight:normal;white-space:nowrap;-webkit-text-stroke:0.2px #a3a3a3;">7</div>
<svg style="position:absolute;left:107.60px;top:275.90px" width="11" height="9" viewBox="0 0 11 9"><ellipse cx="5.4" cy="4.5" rx="4.5" ry="3.4" fill="#c3dbf1" stroke="#83b1dd" stroke-width="1.5"/><path d="M8 3.4 H4.2 Q3.1 3.4 3.1 4.5 Q3.1 5.8 4.4 5.8 H7.6" fill="none" stroke="#6e9fd2" stroke-width="0.9"/></svg>
<svg style="position:absolute;left:136.40px;top:275.80px" width="10" height="9.2" viewBox="0 0 10 9.2"><path d="M1 3 Q1 1.4 2.6 1.2 H7.4 Q9 1.4 9 3 V7 Q9 8.2 7.8 8.2 H2.2 Q1 8.2 1 7 Z" fill="#c3dbf1" stroke="#83b1dd" stroke-width="1.4"/><path d="M1.2 2.8 H8.8" stroke="#6e9fd2" stroke-width="0.8"/></svg>
<svg style="position:absolute;left:179.30px;top:276.20px" width="7" height="8" viewBox="0 0 7 8"><path d="M0.8 0 V7.6 M0.8 0.8 H6.2 L5.4 2.6 L6.2 4.4 H0.8" fill="none" stroke="#8c8c8c" stroke-width="1.1"/></svg>
<div style="position:absolute;left:206.34px;top:274.72px;font-size:8.85px;line-height:10.62px;color:#474747;font-weight:normal;white-space:nowrap;-webkit-text-stroke:0.2px #474747;">12841</div>
<div style="position:absolute;left:271.39px;top:274.72px;font-size:8.85px;line-height:10.62px;color:#474747;font-weight:normal;white-space:nowrap;-webkit-text-stroke:0.2px #474747;">Pricing Tiers</div>
<svg style="position:absolute;left:390.20px;top:272.20px" width="16.40" height="16.40" viewBox="0 0 20 20"><defs><clipPath id="av8"><circle cx="10" cy="10" r="10"/></clipPath></defs><circle cx="10" cy="10" r="10" fill="#d17fbf"/><g clip-path="url(#av8)"><path d="M1 21 Q2 14 10 14 Q18 14 19 21 Z" fill="#2c2622"/><path d="M2 21 Q3 16 7 15 L9 21 Z" fill="#cfcfcf"/><ellipse cx="10" cy="9.4" rx="4.2" ry="5.2" fill="#cf9f86"/><path d="M5.4 7.2 Q5 2.6 10 2.6 Q15.2 2.6 14.8 7.6 Q13.4 5.6 10 5.8 Q6.8 5.8 5.4 7.2 Z" fill="#2a201c"/><path d="M6 10.4 Q6.6 15 10 15 Q13.6 15 14.2 10.4 Q12.6 12.2 10 12.2 Q7.6 12.2 6 10.4 Z" fill="#3a2c24"/><path d="M6 8.4 H14" stroke="#2a2a2a" stroke-width="0.9"/></g></svg>
<div style="position:absolute;left:412.29px;top:274.72px;font-size:8.85px;line-height:10.62px;color:#474747;font-weight:normal;white-space:nowrap;-webkit-text-stroke:0.2px #474747;">Lazarus Barros</div>
<svg style="position:absolute;left:513.50px;top:274.70px" width="11.4" height="11.4" viewBox="0 0 12 12"><rect x="0" y="0" width="12" height="12" rx="1" fill="#3b87d6"/><path d="M3 6.2 L5.1 8.3 L9.2 3.8" fill="none" stroke="#fff" stroke-width="1.7"/></svg>
<div style="position:absolute;left:548.85px;top:274.72px;font-size:8.85px;line-height:10.62px;color:#474747;font-weight:normal;white-space:nowrap;-webkit-text-stroke:0.2px #474747;">07/03</div>
<div style="position:absolute;left:605.90px;top:274.72px;font-size:8.85px;line-height:10.62px;color:#474747;font-weight:normal;white-space:nowrap;-webkit-text-stroke:0.2px #474747;">In Progress</div>
<div style="position:absolute;left:684.42px;top:274.72px;font-size:8.85px;line-height:10.62px;color:#474747;font-weight:normal;white-space:nowrap;-webkit-text-stroke:0.2px #474747;">Testing</div>
<div style="position:absolute;left:759.45px;top:274.72px;font-size:8.85px;line-height:10.62px;color:#474747;font-weight:normal;white-space:nowrap;-webkit-text-stroke:0.2px #474747;">3 - Medium</div>
<svg style="position:absolute;left:842.60px;top:272.20px" width="16.40" height="16.40" viewBox="0 0 20 20"><defs><clipPath id="av9"><circle cx="10" cy="10" r="10"/></clipPath></defs><circle cx="10" cy="10" r="10" fill="#76b24c"/><g clip-path="url(#av9)"><path d="M3.6 20 Q3.4 8 5 5 Q7 2.2 10.2 2.2 Q13.8 2.2 15.4 5.6 Q16.8 9 16.4 20 Z" fill="#4b2f22"/><path d="M4 21 Q5 15.4 10 15.4 Q15 15.4 16 21 Z" fill="#8d8d8d"/><ellipse cx="10" cy="9.2" rx="3.9" ry="5.2" fill="#e8bba6"/></g></svg>
<div style="position:absolute;left:864.59px;top:274.72px;font-size:8.85px;line-height:10.62px;color:#474747;font-weight:normal;white-space:nowrap;-webkit-text-stroke:0.2px #474747;">Burcu Langlois</div>
<div style="position:absolute;left:957.19px;top:274.72px;font-size:8.85px;line-height:10.62px;color:#474747;font-weight:normal;white-space:nowrap;-webkit-text-stroke:0.2px #474747;">Marketing</div>
<div style="position:absolute;left:75.87px;top:301.15px;font-size:8.4px;line-height:10.08px;color:#a3a3a3;font-weight:normal;white-space:nowrap;-webkit-text-stroke:0.2px #a3a3a3;">8</div>
<svg style="position:absolute;left:107.60px;top:302.10px" width="11" height="9" viewBox="0 0 11 9"><ellipse cx="5.4" cy="4.5" rx="4.5" ry="3.4" fill="#c3dbf1" stroke="#83b1dd" stroke-width="1.5"/><path d="M8 3.4 H4.2 Q3.1 3.4 3.1 4.5 Q3.1 5.8 4.4 5.8 H7.6" fill="none" stroke="#6e9fd2" stroke-width="0.9"/></svg>
<svg style="position:absolute;left:122.50px;top:302.00px" width="9.4" height="9.2" viewBox="0 0 9.4 9.2"><path d="M1 1 H8.4 V6.4 H4.4 L3 8.2 V6.4 H1 Z" fill="#c3dbf1" stroke="#83b1dd" stroke-width="1.4" stroke-linejoin="round"/></svg>
<svg style="position:absolute;left:136.40px;top:302.00px" width="10" height="9.2" viewBox="0 0 10 9.2"><path d="M1 3 Q1 1.4 2.6 1.2 H7.4 Q9 1.4 9 3 V7 Q9 8.2 7.8 8.2 H2.2 Q1 8.2 1 7 Z" fill="#c3dbf1" stroke="#83b1dd" stroke-width="1.4"/><path d="M1.2 2.8 H8.8" stroke="#6e9fd2" stroke-width="0.8"/></svg>
<svg style="position:absolute;left:179.30px;top:302.40px" width="7" height="8" viewBox="0 0 7 8"><path d="M0.8 0 V7.6 M0.8 0.8 H6.2 L5.4 2.6 L6.2 4.4 H0.8" fill="none" stroke="#8c8c8c" stroke-width="1.1"/></svg>
<div style="position:absolute;left:206.34px;top:300.92px;font-size:8.85px;line-height:10.62px;color:#474747;font-weight:normal;white-space:nowrap;-webkit-text-stroke:0.2px #474747;">12852</div>
<div style="position:absolute;left:271.30px;top:300.92px;font-size:8.85px;line-height:10.62px;color:#474747;font-weight:normal;white-space:nowrap;-webkit-text-stroke:0.2px #474747;">Industry Verticals</div>
<svg style="position:absolute;left:390.20px;top:298.40px" width="16.40" height="16.40" viewBox="0 0 20 20"><defs><clipPath id="av10"><circle cx="10" cy="10" r="10"/></clipPath></defs><circle cx="10" cy="10" r="10" fill="#d17fbf"/><g clip-path="url(#av10)"><path d="M1 21 Q2 14 10 14 Q18 14 19 21 Z" fill="#2c2622"/><path d="M2 21 Q3 16 7 15 L9 21 Z" fill="#cfcfcf"/><ellipse cx="10" cy="9.4" rx="4.2" ry="5.2" fill="#cf9f86"/><path d="M5.4 7.2 Q5 2.6 10 2.6 Q15.2 2.6 14.8 7.6 Q13.4 5.6 10 5.8 Q6.8 5.8 5.4 7.2 Z" fill="#2a201c"/><path d="M6 10.4 Q6.6 15 10 15 Q13.6 15 14.2 10.4 Q12.6 12.2 10 12.2 Q7.6 12.2 6 10.4 Z" fill="#3a2c24"/><path d="M6 8.4 H14" stroke="#2a2a2a" stroke-width="0.9"/></g></svg>
<div style="position:absolute;left:412.29px;top:300.92px;font-size:8.85px;line-height:10.62px;color:#474747;font-weight:normal;white-space:nowrap;-webkit-text-stroke:0.2px #474747;">Lazarus Barros</div>
<div style="position:absolute;left:513.50px;top:300.90px;width:8.9px;height:8.9px;border:1.25px solid #ababab;border-radius:1.2px;background:#fff"></div>
<div style="position:absolute;left:548.85px;top:300.92px;font-size:8.85px;line-height:10.62px;color:#474747;font-weight:normal;white-space:nowrap;-webkit-text-stroke:0.2px #474747;">08/12</div>
<div style="position:absolute;left:605.90px;top:300.92px;font-size:8.85px;line-height:10.62px;color:#474747;font-weight:normal;white-space:nowrap;-webkit-text-stroke:0.2px #474747;">In Progress</div>
<div style="position:absolute;left:683.80px;top:300.92px;font-size:8.85px;line-height:10.62px;color:#474747;font-weight:normal;white-space:nowrap;-webkit-text-stroke:0.2px #474747;">In-App</div>
<div style="position:absolute;left:759.62px;top:300.92px;font-size:8.85px;line-height:10.62px;color:#474747;font-weight:normal;white-space:nowrap;-webkit-text-stroke:0.2px #474747;">4 - Low</div>
<svg style="position:absolute;left:842.60px;top:298.40px" width="16.40" height="16.40" viewBox="0 0 20 20"><defs><clipPath id="av11"><circle cx="10" cy="10" r="10"/></clipPath></defs><circle cx="10" cy="10" r="10" fill="#2597e0"/><g clip-path="url(#av11)"><path d="M2 21 Q3 13 9 13.4 Q17 13.6 18 21 Z" fill="#f2f5fa"/><ellipse cx="10.6" cy="8.8" rx="3.7" ry="4.8" fill="#e7b7a9" transform="rotate(20 10.6 8.8)"/><path d="M7.6 5 Q9 2.4 12 3 Q15 3.8 14.6 7 Q13 5.2 10.4 5 Z" fill="#3a3b44"/></g></svg>
<div style="position:absolute;left:864.86px;top:300.92px;font-size:8.85px;line-height:10.62px;color:#474747;font-weight:normal;white-space:nowrap;-webkit-text-stroke:0.2px #474747;">Cole Jeanes</div>
<div style="position:absolute;left:957.19px;top:300.92px;font-size:8.85px;line-height:10.62px;color:#474747;font-weight:normal;white-space:nowrap;-webkit-text-stroke:0.2px #474747;">Marketing</div>
<div style="position:absolute;left:75.92px;top:327.35px;font-size:8.4px;line-height:10.08px;color:#a3a3a3;font-weight:normal;white-space:nowrap;-webkit-text-stroke:0.2px #a3a3a3;">9</div>
<svg style="position:absolute;left:179.30px;top:328.60px" width="7" height="8" viewBox="0 0 7 8"><path d="M0.8 0 V7.6 M0.8 0.8 H6.2 L5.4 2.6 L6.2 4.4 H0.8" fill="none" stroke="#8c8c8c" stroke-width="1.1"/></svg>
<svg class="abs" style="left:259.3px;top:331.20px" width="5.2" height="3.4" viewBox="0 0 6 4"><path d="M0 0 H6 L3 4 Z" fill="#7a7a7a"/></svg>
<div style="position:absolute;left:267.25px;top:327.12px;font-size:8.85px;line-height:10.62px;color:#262626;font-weight:bold;white-space:nowrap;">Campaigns</div>
<div style="position:absolute;left:513.50px;top:327.10px;width:8.9px;height:8.9px;border:1.25px solid #ababab;border-radius:1.2px;background:#fff"></div>
<div style="position:absolute;left:71.17px;top:353.55px;font-size:8.4px;line-height:10.08px;color:#a3a3a3;font-weight:normal;white-space:nowrap;-webkit-text-stroke:0.2px #a3a3a3;">10</div>
<svg style="position:absolute;left:107.60px;top:354.50px" width="11" height="9" viewBox="0 0 11 9"><ellipse cx="5.4" cy="4.5" rx="4.5" ry="3.4" fill="#c3dbf1" stroke="#83b1dd" stroke-width="1.5"/><path d="M8 3.4 H4.2 Q3.1 3.4 3.1 4.5 Q3.1 5.8 4.4 5.8 H7.6" fill="none" stroke="#6e9fd2" stroke-width="0.9"/></svg>
<svg style="position:absolute;left:122.50px;top:354.40px" width="9.4" height="9.2" viewBox="0 0 9.4 9.2"><path d="M1 1 H8.4 V6.4 H4.4 L3 8.2 V6.4 H1 Z" fill="#c3dbf1" stroke="#83b1dd" stroke-width="1.4" stroke-linejoin="round"/></svg>
<svg style="position:absolute;left:179.30px;top:354.80px" width="7" height="8" viewBox="0 0 7 8"><path d="M0.8 0 V7.6 M0.8 0.8 H6.2 L5.4 2.6 L6.2 4.4 H0.8" fill="none" stroke="#8c8c8c" stroke-width="1.1"/></svg>
<div style="position:absolute;left:206.34px;top:353.32px;font-size:8.85px;line-height:10.62px;color:#474747;font-weight:normal;white-space:nowrap;-webkit-text-stroke:0.2px #474747;">12848</div>
<div style="position:absolute;left:271.39px;top:353.32px;font-size:8.85px;line-height:10.62px;color:#474747;font-weight:normal;white-space:nowrap;-webkit-text-stroke:0.2px #474747;">Landing page</div>
<svg style="position:absolute;left:390.20px;top:350.80px" width="16.40" height="16.40" viewBox="0 0 20 20"><defs><clipPath id="av12"><circle cx="10" cy="10" r="10"/></clipPath></defs><circle cx="10" cy="10" r="10" fill="#76b24c"/><g clip-path="url(#av12)"><path d="M3.6 20 Q3.4 8 5 5 Q7 2.2 10.2 2.2 Q13.8 2.2 15.4 5.6 Q16.8 9 16.4 20 Z" fill="#4b2f22"/><path d="M4 21 Q5 15.4 10 15.4 Q15 15.4 16 21 Z" fill="#8d8d8d"/><ellipse cx="10" cy="9.2" rx="3.9" ry="5.2" fill="#e8bba6"/></g></svg>
<div style="position:absolute;left:412.29px;top:353.32px;font-size:8.85px;line-height:10.62px;color:#474747;font-weight:normal;white-space:nowrap;-webkit-text-stroke:0.2px #474747;">Burcu Langlois</div>
<div style="position:absolute;left:513.50px;top:353.30px;width:8.9px;height:8.9px;border:1.25px solid #ababab;border-radius:1.2px;background:#fff"></div>
<div style="position:absolute;left:548.85px;top:353.32px;font-size:8.85px;line-height:10.62px;color:#474747;font-weight:normal;white-space:nowrap;-webkit-text-stroke:0.2px #474747;">07/07</div>
<div style="position:absolute;left:605.90px;top:353.32px;font-size:8.85px;line-height:10.62px;color:#474747;font-weight:normal;white-space:nowrap;-webkit-text-stroke:0.2px #474747;">In Review</div>
<div style="position:absolute;left:684.56px;top:353.32px;font-size:8.85px;line-height:10.62px;color:#474747;font-weight:normal;white-space:nowrap;-webkit-text-stroke:0.2px #474747;">Website</div>
<div style="position:absolute;left:759.45px;top:353.32px;font-size:8.85px;line-height:10.62px;color:#474747;font-weight:normal;white-space:nowrap;-webkit-text-stroke:0.2px #474747;">3 - Medium</div>
<svg style="position:absolute;left:842.60px;top:350.80px" width="16.40" height="16.40" viewBox="0 0 20 20"><defs><clipPath id="av13"><circle cx="10" cy="10" r="10"/></clipPath></defs><circle cx="10" cy="10" r="10" fill="#8797e2"/><g clip-path="url(#av13)"><path d="M3.8 19 Q3.4 8 5 5 Q7 2.4 10 2.4 Q13.6 2.4 15.2 5.4 Q16.6 9 16.2 19 Z" fill="#2b1f1b"/><path d="M4 21 Q5 15.6 10 15.6 Q15 15.6 16 21 Z" fill="#d29a8a"/><ellipse cx="10" cy="9.4" rx="3.8" ry="5.1" fill="#b98066"/></g></svg>
<div style="position:absolute;left:864.59px;top:353.32px;font-size:8.85px;line-height:10.62px;color:#474747;font-weight:normal;white-space:nowrap;-webkit-text-stroke:0.2px #474747;">Leigh Gibbs</div>
<div style="position:absolute;left:957.19px;top:353.32px;font-size:8.85px;line-height:10.62px;color:#474747;font-weight:normal;white-space:nowrap;-webkit-text-stroke:0.2px #474747;">Marketing</div>
<div style="position:absolute;left:71.88px;top:379.75px;font-size:8.4px;line-height:10.08px;color:#a3a3a3;font-weight:normal;white-space:nowrap;-webkit-text-stroke:0.2px #a3a3a3;">11</div>
<svg style="position:absolute;left:107.60px;top:380.70px" width="11" height="9" viewBox="0 0 11 9"><ellipse cx="5.4" cy="4.5" rx="4.5" ry="3.4" fill="#c3dbf1" stroke="#83b1dd" stroke-width="1.5"/><path d="M8 3.4 H4.2 Q3.1 3.4 3.1 4.5 Q3.1 5.8 4.4 5.8 H7.6" fill="none" stroke="#6e9fd2" stroke-width="0.9"/></svg>
<svg style="position:absolute;left:122.50px;top:380.60px" width="9.4" height="9.2" viewBox="0 0 9.4 9.2"><path d="M1 1 H8.4 V6.4 H4.4 L3 8.2 V6.4 H1 Z" fill="#c3dbf1" stroke="#83b1dd" stroke-width="1.4" stroke-linejoin="round"/></svg>
<svg style="position:absolute;left:136.40px;top:380.60px" width="10" height="9.2" viewBox="0 0 10 9.2"><path d="M1 3 Q1 1.4 2.6 1.2 H7.4 Q9 1.4 9 3 V7 Q9 8.2 7.8 8.2 H2.2 Q1 8.2 1 7 Z" fill="#c3dbf1" stroke="#83b1dd" stroke-width="1.4"/><path d="M1.2 2.8 H8.8" stroke="#6e9fd2" stroke-width="0.8"/></svg>
<svg style="position:absolute;left:150.90px;top:380.40px" width="9.2" height="9.6" viewBox="0 0 9.2 9.6"><path d="M1 7.2 Q2.2 6.2 2.2 4.2 Q2.2 1 4.6 1 Q7 1 7 4.2 Q7 6.2 8.2 7.2 Z" fill="#c3dbf1" stroke="#83b1dd" stroke-width="1.4" stroke-linejoin="round"/><path d="M3.6 8.4 H5.6" stroke="#83b1dd" stroke-width="1.3"/></svg>
<svg style="position:absolute;left:179.30px;top:381.00px" width="7" height="8" viewBox="0 0 7 8"><path d="M0.8 0 V7.6" stroke="#c2672b" stroke-width="1.3"/><path d="M0.8 0.2 H6.6 V5 H0.8 Z" fill="#c0682c"/></svg>
<div style="position:absolute;left:206.34px;top:379.52px;font-size:8.85px;line-height:10.62px;color:#474747;font-weight:normal;white-space:nowrap;-webkit-text-stroke:0.2px #474747;">12837</div>
<div style="position:absolute;left:271.70px;top:379.52px;font-size:8.85px;line-height:10.62px;color:#474747;font-weight:normal;white-space:nowrap;-webkit-text-stroke:0.2px #474747;">Social post</div>
<svg style="position:absolute;left:390.20px;top:377.00px" width="16.40" height="16.40" viewBox="0 0 20 20"><defs><clipPath id="av14"><circle cx="10" cy="10" r="10"/></clipPath></defs><circle cx="10" cy="10" r="10" fill="#76b24c"/><g clip-path="url(#av14)"><path d="M3.6 20 Q3.4 8 5 5 Q7 2.2 10.2 2.2 Q13.8 2.2 15.4 5.6 Q16.8 9 16.4 20 Z" fill="#4b2f22"/><path d="M4 21 Q5 15.4 10 15.4 Q15 15.4 16 21 Z" fill="#8d8d8d"/><ellipse cx="10" cy="9.2" rx="3.9" ry="5.2" fill="#e8bba6"/></g></svg>
<div style="position:absolute;left:412.29px;top:379.52px;font-size:8.85px;line-height:10.62px;color:#474747;font-weight:normal;white-space:nowrap;-webkit-text-stroke:0.2px #474747;">Burcu Langlois</div>
<svg style="position:absolute;left:513.50px;top:379.50px" width="11.4" height="11.4" viewBox="0 0 12 12"><rect x="0" y="0" width="12" height="12" rx="1" fill="#3b87d6"/><path d="M3 6.2 L5.1 8.3 L9.2 3.8" fill="none" stroke="#fff" stroke-width="1.7"/></svg>
<div style="position:absolute;left:548.85px;top:379.52px;font-size:8.85px;line-height:10.62px;color:#474747;font-weight:normal;white-space:nowrap;-webkit-text-stroke:0.2px #474747;">07/03</div>
<div style="position:absolute;left:605.90px;top:379.52px;font-size:8.85px;line-height:10.62px;color:#474747;font-weight:normal;white-space:nowrap;-webkit-text-stroke:0.2px #474747;">In Progress</div>
<div style="position:absolute;left:684.20px;top:379.52px;font-size:8.85px;line-height:10.62px;color:#474747;font-weight:normal;white-space:nowrap;-webkit-text-stroke:0.2px #474747;">Social</div>
<div style="position:absolute;left:759.14px;top:379.52px;font-size:8.85px;line-height:10.62px;color:#474747;font-weight:normal;white-space:nowrap;-webkit-text-stroke:0.2px #474747;">1 - Highest</div>
<svg style="position:absolute;left:842.60px;top:377.00px" width="16.40" height="16.40" viewBox="0 0 20 20"><defs><clipPath id="av15"><circle cx="10" cy="10" r="10"/></clipPath></defs><circle cx="10" cy="10" r="10" fill="#76b24c"/><g clip-path="url(#av15)"><path d="M3.6 20 Q3.4 8 5 5 Q7 2.2 10.2 2.2 Q13.8 2.2 15.4 5.6 Q16.8 9 16.4 20 Z" fill="#4b2f22"/><path d="M4 21 Q5 15.4 10 15.4 Q15 15.4 16 21 Z" fill="#8d8d8d"/><ellipse cx="10" cy="9.2" rx="3.9" ry="5.2" fill="#e8bba6"/></g></svg>
<div style="position:absolute;left:864.59px;top:379.52px;font-size:8.85px;line-height:10.62px;color:#474747;font-weight:normal;white-space:nowrap;-webkit-text-stroke:0.2px #474747;">Burcu Langlois</div>
<div style="position:absolute;left:957.19px;top:379.52px;font-size:8.85px;line-height:10.62px;color:#474747;font-weight:normal;white-space:nowrap;-webkit-text-stroke:0.2px #474747;">Marketing</div>
<div style="position:absolute;left:71.30px;top:405.95px;font-size:8.4px;line-height:10.08px;color:#a3a3a3;font-weight:normal;white-space:nowrap;-webkit-text-stroke:0.2px #a3a3a3;">12</div>
<svg style="position:absolute;left:107.60px;top:406.90px" width="11" height="9" viewBox="0 0 11 9"><ellipse cx="5.4" cy="4.5" rx="4.5" ry="3.4" fill="#c3dbf1" stroke="#83b1dd" stroke-width="1.5"/><path d="M8 3.4 H4.2 Q3.1 3.4 3.1 4.5 Q3.1 5.8 4.4 5.8 H7.6" fill="none" stroke="#6e9fd2" stroke-width="0.9"/></svg>
<svg style="position:absolute;left:136.40px;top:406.80px" width="10" height="9.2" viewBox="0 0 10 9.2"><path d="M1 3 Q1 1.4 2.6 1.2 H7.4 Q9 1.4 9 3 V7 Q9 8.2 7.8 8.2 H2.2 Q1 8.2 1 7 Z" fill="#c3dbf1" stroke="#83b1dd" stroke-width="1.4"/><path d="M1.2 2.8 H8.8" stroke="#6e9fd2" stroke-width="0.8"/></svg>
<svg style="position:absolute;left:179.30px;top:407.20px" width="7" height="8" viewBox="0 0 7 8"><path d="M0.8 0 V7.6 M0.8 0.8 H6.2 L5.4 2.6 L6.2 4.4 H0.8" fill="none" stroke="#8c8c8c" stroke-width="1.1"/></svg>
<div style="position:absolute;left:206.34px;top:405.72px;font-size:8.85px;line-height:10.62px;color:#474747;font-weight:normal;white-space:nowrap;-webkit-text-stroke:0.2px #474747;">12854</div>
<div style="position:absolute;left:271.39px;top:405.72px;font-size:8.85px;line-height:10.62px;color:#474747;font-weight:normal;white-space:nowrap;-webkit-text-stroke:0.2px #474747;">Email Campaign</div>
<svg style="position:absolute;left:390.20px;top:403.20px" width="16.40" height="16.40" viewBox="0 0 20 20"><defs><clipPath id="av16"><circle cx="10" cy="10" r="10"/></clipPath></defs><circle cx="10" cy="10" r="10" fill="#76b24c"/><g clip-path="url(#av16)"><path d="M3.6 20 Q3.4 8 5 5 Q7 2.2 10.2 2.2 Q13.8 2.2 15.4 5.6 Q16.8 9 16.4 20 Z" fill="#4b2f22"/><path d="M4 21 Q5 15.4 10 15.4 Q15 15.4 16 21 Z" fill="#8d8d8d"/><ellipse cx="10" cy="9.2" rx="3.9" ry="5.2" fill="#e8bba6"/></g></svg>
<div style="position:absolute;left:412.29px;top:405.72px;font-size:8.85px;line-height:10.62px;color:#474747;font-weight:normal;white-space:nowrap;-webkit-text-stroke:0.2px #474747;">Burcu Langlois</div>
<div style="position:absolute;left:513.50px;top:405.70px;width:8.9px;height:8.9px;border:1.25px solid #ababab;border-radius:1.2px;background:#fff"></div>
<div style="position:absolute;left:548.85px;top:405.72px;font-size:8.85px;line-height:10.62px;color:#474747;font-weight:normal;white-space:nowrap;-webkit-text-stroke:0.2px #474747;">07/26</div>
<div style="position:absolute;left:606.26px;top:405.72px;font-size:8.85px;line-height:10.62px;color:#474747;font-weight:normal;white-space:nowrap;-webkit-text-stroke:0.2px #474747;">Closed</div>
<div style="position:absolute;left:683.89px;top:405.72px;font-size:8.85px;line-height:10.62px;color:#474747;font-weight:normal;white-space:nowrap;-webkit-text-stroke:0.2px #474747;">Email</div>
<div style="position:absolute;left:759.36px;top:405.72px;font-size:8.85px;line-height:10.62px;color:#474747;font-weight:normal;white-space:nowrap;-webkit-text-stroke:0.2px #474747;">2 - High</div>
<svg style="position:absolute;left:842.60px;top:403.20px" width="16.40" height="16.40" viewBox="0 0 20 20"><defs><clipPath id="av17"><circle cx="10" cy="10" r="10"/></clipPath></defs><circle cx="10" cy="10" r="10" fill="#76b24c"/><g clip-path="url(#av17)"><path d="M3.6 20 Q3.4 8 5 5 Q7 2.2 10.2 2.2 Q13.8 2.2 15.4 5.6 Q16.8 9 16.4 20 Z" fill="#4b2f22"/><path d="M4 21 Q5 15.4 10 15.4 Q15 15.4 16 21 Z" fill="#8d8d8d"/><ellipse cx="10" cy="9.2" rx="3.9" ry="5.2" fill="#e8bba6"/></g></svg>
<div style="position:absolute;left:864.59px;top:405.72px;font-size:8.85px;line-height:10.62px;color:#474747;font-weight:normal;white-space:nowrap;-webkit-text-stroke:0.2px #474747;">Burcu Langlois</div>
<div style="position:absolute;left:957.90px;top:405.72px;font-size:8.85px;line-height:10.62px;color:#474747;font-weight:normal;white-space:nowrap;-webkit-text-stroke:0.2px #474747;">Automation</div>
<div style="position:absolute;left:71.21px;top:432.15px;font-size:8.4px;line-height:10.08px;color:#a3a3a3;font-weight:normal;white-space:nowrap;-webkit-text-stroke:0.2px #a3a3a3;">13</div>
<svg style="position:absolute;left:179.30px;top:433.40px" width="7" height="8" viewBox="0 0 7 8"><path d="M0.8 0 V7.6 M0.8 0.8 H6.2 L5.4 2.6 L6.2 4.4 H0.8" fill="none" stroke="#8e9c80" stroke-width="1.1"/></svg>
<svg class="abs" style="left:259.3px;top:436.00px" width="5.2" height="3.4" viewBox="0 0 6 4"><path d="M0 0 H6 L3 4 Z" fill="#b4553e"/></svg>
<div style="position:absolute;left:267.02px;top:431.92px;font-size:8.85px;line-height:10.62px;color:#262626;font-weight:bold;white-space:nowrap;">Product</div>
<div style="position:absolute;left:513.50px;top:431.90px;width:8.9px;height:8.9px;border:1.25px solid #ababab;border-radius:1.2px;background:#fff"></div>
<div style="position:absolute;left:71.13px;top:458.35px;font-size:8.4px;line-height:10.08px;color:#a3a3a3;font-weight:normal;white-space:nowrap;-webkit-text-stroke:0.2px #a3a3a3;">14</div>
<svg style="position:absolute;left:107.60px;top:459.30px" width="11" height="9" viewBox="0 0 11 9"><ellipse cx="5.4" cy="4.5" rx="4.5" ry="3.4" fill="#c3dbf1" stroke="#83b1dd" stroke-width="1.5"/><path d="M8 3.4 H4.2 Q3.1 3.4 3.1 4.5 Q3.1 5.8 4.4 5.8 H7.6" fill="none" stroke="#6e9fd2" stroke-width="0.9"/></svg>
<svg style="position:absolute;left:150.90px;top:459.00px" width="9.2" height="9.6" viewBox="0 0 9.2 9.6"><path d="M1 7.2 Q2.2 6.2 2.2 4.2 Q2.2 1 4.6 1 Q7 1 7 4.2 Q7 6.2 8.2 7.2 Z" fill="#c3dbf1" stroke="#83b1dd" stroke-width="1.4" stroke-linejoin="round"/><path d="M3.6 8.4 H5.6" stroke="#83b1dd" stroke-width="1.3"/></svg>
<svg style="position:absolute;left:179.30px;top:459.60px" width="7" height="8" viewBox="0 0 7 8"><path d="M0.8 0 V7.6 M0.8 0.8 H6.2 L5.4 2.6 L6.2 4.4 H0.8" fill="none" stroke="#8c8c8c" stroke-width="1.1"/></svg>
<div style="position:absolute;left:206.34px;top:458.12px;font-size:8.85px;line-height:10.62px;color:#474747;font-weight:normal;white-space:nowrap;-webkit-text-stroke:0.2px #474747;">12844</div>
<div style="position:absolute;left:271.39px;top:458.12px;font-size:8.85px;line-height:10.62px;color:#474747;font-weight:normal;white-space:nowrap;-webkit-text-stroke:0.2px #474747;">Empty State</div>
<svg style="position:absolute;left:390.20px;top:455.60px" width="16.40" height="16.40" viewBox="0 0 20 20"><defs><clipPath id="av18"><circle cx="10" cy="10" r="10"/></clipPath></defs><circle cx="10" cy="10" r="10" fill="#efb21c"/><g clip-path="url(#av18)"><path d="M2 21 Q3 14.4 10 14.4 Q17 14.4 18 21 Z" fill="#d4e2f0"/><path d="M8.6 14.4 L10 21 L11.4 14.4 Z" fill="#2a2a2a"/><ellipse cx="10" cy="9.6" rx="3.8" ry="5" fill="#6f4a38"/><path d="M5.8 8 Q5.4 2.6 10 2.6 Q14.6 2.6 14.2 8 Q13 5.6 10 5.6 Q7 5.6 5.8 8 Z" fill="#1e1714"/></g></svg>
<div style="position:absolute;left:412.60px;top:458.12px;font-size:8.85px;line-height:10.62px;color:#474747;font-weight:normal;white-space:nowrap;-webkit-text-stroke:0.2px #474747;">Seòras Jagoda</div>
<div style="position:absolute;left:513.50px;top:458.10px;width:8.9px;height:8.9px;border:1.25px solid #ababab;border-radius:1.2px;background:#fff"></div>
<div style="position:absolute;left:548.85px;top:458.12px;font-size:8.85px;line-height:10.62px;color:#474747;font-weight:normal;white-space:nowrap;-webkit-text-stroke:0.2px #474747;">08/17</div>
<div style="position:absolute;left:605.99px;top:458.12px;font-size:8.85px;line-height:10.62px;color:#474747;font-weight:normal;white-space:nowrap;-webkit-text-stroke:0.2px #474747;">Requirements</div>
<div style="position:absolute;left:683.80px;top:458.12px;font-size:8.85px;line-height:10.62px;color:#474747;font-weight:normal;white-space:nowrap;-webkit-text-stroke:0.2px #474747;">In-App</div>
<div style="position:absolute;left:759.14px;top:458.12px;font-size:8.85px;line-height:10.62px;color:#474747;font-weight:normal;white-space:nowrap;-webkit-text-stroke:0.2px #474747;">1 - Highest</div>
<svg style="position:absolute;left:842.60px;top:455.60px" width="16.40" height="16.40" viewBox="0 0 20 20"><defs><clipPath id="av19"><circle cx="10" cy="10" r="10"/></clipPath></defs><circle cx="10" cy="10" r="10" fill="#2597e0"/><g clip-path="url(#av19)"><path d="M2 21 Q3 13 9 13.4 Q17 13.6 18 21 Z" fill="#f2f5fa"/><ellipse cx="10.6" cy="8.8" rx="3.7" ry="4.8" fill="#e7b7a9" transform="rotate(20 10.6 8.8)"/><path d="M7.6 5 Q9 2.4 12 3 Q15 3.8 14.6 7 Q13 5.2 10.4 5 Z" fill="#3a3b44"/></g></svg>
<div style="position:absolute;left:864.86px;top:458.12px;font-size:8.85px;line-height:10.62px;color:#474747;font-weight:normal;white-space:nowrap;-webkit-text-stroke:0.2px #474747;">Cole Jeanes</div>
<div style="position:absolute;left:957.19px;top:458.12px;font-size:8.85px;line-height:10.62px;color:#474747;font-weight:normal;white-space:nowrap;-webkit-text-stroke:0.2px #474747;">Experience</div>
<div style="position:absolute;left:71.21px;top:484.55px;font-size:8.4px;line-height:10.08px;color:#a3a3a3;font-weight:normal;white-space:nowrap;-webkit-text-stroke:0.2px #a3a3a3;">15</div>
<svg style="position:absolute;left:107.60px;top:485.50px" width="11" height="9" viewBox="0 0 11 9"><ellipse cx="5.4" cy="4.5" rx="4.5" ry="3.4" fill="#c3dbf1" stroke="#83b1dd" stroke-width="1.5"/><path d="M8 3.4 H4.2 Q3.1 3.4 3.1 4.5 Q3.1 5.8 4.4 5.8 H7.6" fill="none" stroke="#6e9fd2" stroke-width="0.9"/></svg>
<svg style="position:absolute;left:122.50px;top:485.40px" width="9.4" height="9.2" viewBox="0 0 9.4 9.2"><path d="M1 1 H8.4 V6.4 H4.4 L3 8.2 V6.4 H1 Z" fill="#c3dbf1" stroke="#83b1dd" stroke-width="1.4" stroke-linejoin="round"/></svg>
<svg style="position:absolute;left:179.30px;top:485.80px" width="7" height="8" viewBox="0 0 7 8"><path d="M0.8 0 V7.6 M0.8 0.8 H6.2 L5.4 2.6 L6.2 4.4 H0.8" fill="none" stroke="#8c8c8c" stroke-width="1.1"/></svg>
<div style="position:absolute;left:206.34px;top:484.32px;font-size:8.85px;line-height:10.62px;color:#474747;font-weight:normal;white-space:nowrap;-webkit-text-stroke:0.2px #474747;">12853</div>
<div style="position:absolute;left:271.70px;top:484.32px;font-size:8.85px;line-height:10.62px;color:#474747;font-weight:normal;white-space:nowrap;-webkit-text-stroke:0.2px #474747;">Onboarding</div>
<svg style="position:absolute;left:390.20px;top:481.80px" width="16.40" height="16.40" viewBox="0 0 20 20"><defs><clipPath id="av20"><circle cx="10" cy="10" r="10"/></clipPath></defs><circle cx="10" cy="10" r="10" fill="#efb21c"/><g clip-path="url(#av20)"><path d="M2 21 Q3 14.4 10 14.4 Q17 14.4 18 21 Z" fill="#d4e2f0"/><path d="M8.6 14.4 L10 21 L11.4 14.4 Z" fill="#2a2a2a"/><ellipse cx="10" cy="9.6" rx="3.8" ry="5" fill="#6f4a38"/><path d="M5.8 8 Q5.4 2.6 10 2.6 Q14.6 2.6 14.2 8 Q13 5.6 10 5.6 Q7 5.6 5.8 8 Z" fill="#1e1714"/></g></svg>
<div style="position:absolute;left:412.60px;top:484.32px;font-size:8.85px;line-height:10.62px;color:#474747;font-weight:normal;white-space:nowrap;-webkit-text-stroke:0.2px #474747;">Seòras Jagoda</div>
<div style="position:absolute;left:513.50px;top:484.30px;width:8.9px;height:8.9px;border:1.25px solid #ababab;border-radius:1.2px;background:#fff"></div>
<div style="position:absolute;left:548.85px;top:484.32px;font-size:8.85px;line-height:10.62px;color:#474747;font-weight:normal;white-space:nowrap;-webkit-text-stroke:0.2px #474747;">08/08</div>
<div style="position:absolute;left:606.52px;top:484.32px;font-size:8.85px;line-height:10.62px;color:#474747;font-weight:normal;white-space:nowrap;-webkit-text-stroke:0.2px #474747;">To Do</div>
<div style="position:absolute;left:683.80px;top:484.32px;font-size:8.85px;line-height:10.62px;color:#474747;font-weight:normal;white-space:nowrap;-webkit-text-stroke:0.2px #474747;">In-App</div>
<div style="position:absolute;left:759.36px;top:484.32px;font-size:8.85px;line-height:10.62px;color:#474747;font-weight:normal;white-space:nowrap;-webkit-text-stroke:0.2px #474747;">2 - High</div>
<svg style="position:absolute;left:842.60px;top:481.80px" width="16.40" height="16.40" viewBox="0 0 20 20"><defs><clipPath id="av21"><circle cx="10" cy="10" r="10"/></clipPath></defs><circle cx="10" cy="10" r="10" fill="#2597e0"/><g clip-path="url(#av21)"><path d="M2 21 Q3 13 9 13.4 Q17 13.6 18 21 Z" fill="#f2f5fa"/><ellipse cx="10.6" cy="8.8" rx="3.7" ry="4.8" fill="#e7b7a9" transform="rotate(20 10.6 8.8)"/><path d="M7.6 5 Q9 2.4 12 3 Q15 3.8 14.6 7 Q13 5.2 10.4 5 Z" fill="#3a3b44"/></g></svg>
<div style="position:absolute;left:864.86px;top:484.32px;font-size:8.85px;line-height:10.62px;color:#474747;font-weight:normal;white-space:nowrap;-webkit-text-stroke:0.2px #474747;">Cole Jeanes</div>
<div style="position:absolute;left:957.19px;top:484.32px;font-size:8.85px;line-height:10.62px;color:#474747;font-weight:normal;white-space:nowrap;-webkit-text-stroke:0.2px #474747;">Experience</div>
<div style="position:absolute;left:71.21px;top:510.75px;font-size:8.4px;line-height:10.08px;color:#a3a3a3;font-weight:normal;white-space:nowrap;-webkit-text-stroke:0.2px #a3a3a3;">16</div>
<svg style="position:absolute;left:107.60px;top:511.70px" width="11" height="9" viewBox="0 0 11 9"><ellipse cx="5.4" cy="4.5" rx="4.5" ry="3.4" fill="#c3dbf1" stroke="#83b1dd" stroke-width="1.5"/><path d="M8 3.4 H4.2 Q3.1 3.4 3.1 4.5 Q3.1 5.8 4.4 5.8 H7.6" fill="none" stroke="#6e9fd2" stroke-width="0.9"/></svg>
<svg style="position:absolute;left:136.40px;top:511.60px" width="10" height="9.2" viewBox="0 0 10 9.2"><path d="M1 3 Q1 1.4 2.6 1.2 H7.4 Q9 1.4 9 3 V7 Q9 8.2 7.8 8.2 H2.2 Q1 8.2 1 7 Z" fill="#c3dbf1" stroke="#83b1dd" stroke-width="1.4"/><path d="M1.2 2.8 H8.8" stroke="#6e9fd2" stroke-width="0.8"/></svg>
<svg style="position:absolute;left:179.30px;top:512.00px" width="7" height="8" viewBox="0 0 7 8"><path d="M0.8 0 V7.6 M0.8 0.8 H6.2 L5.4 2.6 L6.2 4.4 H0.8" fill="none" stroke="#8c8c8c" stroke-width="1.1"/></svg>
<div style="position:absolute;left:206.34px;top:510.52px;font-size:8.85px;line-height:10.62px;color:#474747;font-weight:normal;white-space:nowrap;-webkit-text-stroke:0.2px #474747;">12850</div>
<div style="position:absolute;left:272.10px;top:510.52px;font-size:8.85px;line-height:10.62px;color:#474747;font-weight:normal;white-space:nowrap;-webkit-text-stroke:0.2px #474747;">Add Page Animation</div>
<svg style="position:absolute;left:390.20px;top:508.00px" width="16.40" height="16.40" viewBox="0 0 20 20"><defs><clipPath id="av22"><circle cx="10" cy="10" r="10"/></clipPath></defs><circle cx="10" cy="10" r="10" fill="#efb21c"/><g clip-path="url(#av22)"><path d="M2 21 Q3 14.4 10 14.4 Q17 14.4 18 21 Z" fill="#d4e2f0"/><path d="M8.6 14.4 L10 21 L11.4 14.4 Z" fill="#2a2a2a"/><ellipse cx="10" cy="9.6" rx="3.8" ry="5" fill="#6f4a38"/><path d="M5.8 8 Q5.4 2.6 10 2.6 Q14.6 2.6 14.2 8 Q13 5.6 10 5.6 Q7 5.6 5.8 8 Z" fill="#1e1714"/></g></svg>
<div style="position:absolute;left:412.60px;top:510.52px;font-size:8.85px;line-height:10.62px;color:#474747;font-weight:normal;white-space:nowrap;-webkit-text-stroke:0.2px #474747;">Seòras Jagoda</div>
<div style="position:absolute;left:513.50px;top:510.50px;width:8.9px;height:8.9px;border:1.25px solid #ababab;border-radius:1.2px;background:#fff"></div>
<div style="position:absolute;left:548.85px;top:510.52px;font-size:8.85px;line-height:10.62px;color:#474747;font-weight:normal;white-space:nowrap;-webkit-text-stroke:0.2px #474747;">08/05</div>
<div style="position:absolute;left:605.90px;top:510.52px;font-size:8.85px;line-height:10.62px;color:#474747;font-weight:normal;white-space:nowrap;-webkit-text-stroke:0.2px #474747;">In Progress</div>
<div style="position:absolute;left:684.42px;top:510.52px;font-size:8.85px;line-height:10.62px;color:#474747;font-weight:normal;white-space:nowrap;-webkit-text-stroke:0.2px #474747;">Testing</div>
<div style="position:absolute;left:759.62px;top:510.52px;font-size:8.85px;line-height:10.62px;color:#474747;font-weight:normal;white-space:nowrap;-webkit-text-stroke:0.2px #474747;">4 - Low</div>
<svg style="position:absolute;left:842.60px;top:508.00px" width="16.40" height="16.40" viewBox="0 0 20 20"><defs><clipPath id="av23"><circle cx="10" cy="10" r="10"/></clipPath></defs><circle cx="10" cy="10" r="10" fill="#76b24c"/><g clip-path="url(#av23)"><path d="M3.6 20 Q3.4 8 5 5 Q7 2.2 10.2 2.2 Q13.8 2.2 15.4 5.6 Q16.8 9 16.4 20 Z" fill="#4b2f22"/><path d="M4 21 Q5 15.4 10 15.4 Q15 15.4 16 21 Z" fill="#8d8d8d"/><ellipse cx="10" cy="9.2" rx="3.9" ry="5.2" fill="#e8bba6"/></g></svg>
<div style="position:absolute;left:864.59px;top:510.52px;font-size:8.85px;line-height:10.62px;color:#474747;font-weight:normal;white-space:nowrap;-webkit-text-stroke:0.2px #474747;">Burcu Langlois</div>
<div style="position:absolute;left:957.19px;top:510.52px;font-size:8.85px;line-height:10.62px;color:#474747;font-weight:normal;white-space:nowrap;-webkit-text-stroke:0.2px #474747;">Product</div>
<div style="position:absolute;left:71.30px;top:536.95px;font-size:8.4px;line-height:10.08px;color:#a3a3a3;font-weight:normal;white-space:nowrap;-webkit-text-stroke:0.2px #a3a3a3;">17</div>
<svg style="position:absolute;left:107.60px;top:537.90px" width="11" height="9" viewBox="0 0 11 9"><ellipse cx="5.4" cy="4.5" rx="4.5" ry="3.4" fill="#c3dbf1" stroke="#83b1dd" stroke-width="1.5"/><path d="M8 3.4 H4.2 Q3.1 3.4 3.1 4.5 Q3.1 5.8 4.4 5.8 H7.6" fill="none" stroke="#6e9fd2" stroke-width="0.9"/></svg>
<svg style="position:absolute;left:136.40px;top:537.80px" width="10" height="9.2" viewBox="0 0 10 9.2"><path d="M1 3 Q1 1.4 2.6 1.2 H7.4 Q9 1.4 9 3 V7 Q9 8.2 7.8 8.2 H2.2 Q1 8.2 1 7 Z" fill="#c3dbf1" stroke="#83b1dd" stroke-width="1.4"/><path d="M1.2 2.8 H8.8" stroke="#6e9fd2" stroke-width="0.8"/></svg>
<svg style="position:absolute;left:179.30px;top:538.20px" width="7" height="8" viewBox="0 0 7 8"><path d="M0.8 0 V7.6 M0.8 0.8 H6.2 L5.4 2.6 L6.2 4.4 H0.8" fill="none" stroke="#8c8c8c" stroke-width="1.1"/></svg>
<div style="position:absolute;left:206.34px;top:536.72px;font-size:8.85px;line-height:10.62px;color:#474747;font-weight:normal;white-space:nowrap;-webkit-text-stroke:0.2px #474747;">12849</div>
<div style="position:absolute;left:271.92px;top:536.72px;font-size:8.85px;line-height:10.62px;color:#474747;font-weight:normal;white-space:nowrap;-webkit-text-stroke:0.2px #474747;">Tool Tip</div>
<svg style="position:absolute;left:390.20px;top:534.20px" width="16.40" height="16.40" viewBox="0 0 20 20"><defs><clipPath id="av24"><circle cx="10" cy="10" r="10"/></clipPath></defs><circle cx="10" cy="10" r="10" fill="#efb21c"/><g clip-path="url(#av24)"><path d="M2 21 Q3 14.4 10 14.4 Q17 14.4 18 21 Z" fill="#d4e2f0"/><path d="M8.6 14.4 L10 21 L11.4 14.4 Z" fill="#2a2a2a"/><ellipse cx="10" cy="9.6" rx="3.8" ry="5" fill="#6f4a38"/><path d="M5.8 8 Q5.4 2.6 10 2.6 Q14.6 2.6 14.2 8 Q13 5.6 10 5.6 Q7 5.6 5.8 8 Z" fill="#1e1714"/></g></svg>
<div style="position:absolute;left:412.60px;top:536.72px;font-size:8.85px;line-height:10.62px;color:#474747;font-weight:normal;white-space:nowrap;-webkit-text-stroke:0.2px #474747;">Seòras Jagoda</div>
<div style="position:absolute;left:513.50px;top:536.70px;width:8.9px;height:8.9px;border:1.25px solid #ababab;border-radius:1.2px;background:#fff"></div>
<div style="position:absolute;left:548.85px;top:536.72px;font-size:8.85px;line-height:10.62px;color:#474747;font-weight:normal;white-space:nowrap;-webkit-text-stroke:0.2px #474747;">08/05</div>
<div style="position:absolute;left:605.90px;top:536.72px;font-size:8.85px;line-height:10.62px;color:#474747;font-weight:normal;white-space:nowrap;-webkit-text-stroke:0.2px #474747;">In Progress</div>
<div style="position:absolute;left:684.56px;top:536.72px;font-size:8.85px;line-height:10.62px;color:#474747;font-weight:normal;white-space:nowrap;-webkit-text-stroke:0.2px #474747;">Video</div>
<div style="position:absolute;left:759.45px;top:536.72px;font-size:8.85px;line-height:10.62px;color:#474747;font-weight:normal;white-space:nowrap;-webkit-text-stroke:0.2px #474747;">3 - Medium</div>
<svg style="position:absolute;left:842.60px;top:534.20px" width="16.40" height="16.40" viewBox="0 0 20 20"><defs><clipPath id="av25"><circle cx="10" cy="10" r="10"/></clipPath></defs><circle cx="10" cy="10" r="10" fill="#76b24c"/><g clip-path="url(#av25)"><path d="M3.6 20 Q3.4 8 5 5 Q7 2.2 10.2 2.2 Q13.8 2.2 15.4 5.6 Q16.8 9 16.4 20 Z" fill="#4b2f22"/><path d="M4 21 Q5 15.4 10 15.4 Q15 15.4 16 21 Z" fill="#8d8d8d"/><ellipse cx="10" cy="9.2" rx="3.9" ry="5.2" fill="#e8bba6"/></g></svg>
<div style="position:absolute;left:864.59px;top:536.72px;font-size:8.85px;line-height:10.62px;color:#474747;font-weight:normal;white-space:nowrap;-webkit-text-stroke:0.2px #474747;">Burcu Langlois</div>
<div style="position:absolute;left:957.19px;top:536.72px;font-size:8.85px;line-height:10.62px;color:#474747;font-weight:normal;white-space:nowrap;-webkit-text-stroke:0.2px #474747;">Experience</div>
<div style="position:absolute;left:71.21px;top:563.15px;font-size:8.4px;line-height:10.08px;color:#a3a3a3;font-weight:normal;white-space:nowrap;-webkit-text-stroke:0.2px #a3a3a3;">18</div>
<svg style="position:absolute;left:107.60px;top:564.10px" width="11" height="9" viewBox="0 0 11 9"><ellipse cx="5.4" cy="4.5" rx="4.5" ry="3.4" fill="#c3dbf1" stroke="#83b1dd" stroke-width="1.5"/><path d="M8 3.4 H4.2 Q3.1 3.4 3.1 4.5 Q3.1 5.8 4.4 5.8 H7.6" fill="none" stroke="#6e9fd2" stroke-width="0.9"/></svg>
<svg style="position:absolute;left:136.40px;top:564.00px" width="10" height="9.2" viewBox="0 0 10 9.2"><path d="M1 3 Q1 1.4 2.6 1.2 H7.4 Q9 1.4 9 3 V7 Q9 8.2 7.8 8.2 H2.2 Q1 8.2 1 7 Z" fill="#c3dbf1" stroke="#83b1dd" stroke-width="1.4"/><path d="M1.2 2.8 H8.8" stroke="#6e9fd2" stroke-width="0.8"/></svg>
<svg style="position:absolute;left:179.30px;top:564.40px" width="7" height="8" viewBox="0 0 7 8"><path d="M0.8 0 V7.6 M0.8 0.8 H6.2 L5.4 2.6 L6.2 4.4 H0.8" fill="none" stroke="#8c8c8c" stroke-width="1.1"/></svg>
<div style="position:absolute;left:206.34px;top:562.92px;font-size:8.85px;line-height:10.62px;color:#474747;font-weight:normal;white-space:nowrap;-webkit-text-stroke:0.2px #474747;">12839</div>
<div style="position:absolute;left:271.39px;top:562.92px;font-size:8.85px;line-height:10.62px;color:#474747;font-weight:normal;white-space:nowrap;-webkit-text-stroke:0.2px #474747;">Hero Illustration</div>
<svg style="position:absolute;left:390.20px;top:560.40px" width="16.40" height="16.40" viewBox="0 0 20 20"><defs><clipPath id="av26"><circle cx="10" cy="10" r="10"/></clipPath></defs><circle cx="10" cy="10" r="10" fill="#efb21c"/><g clip-path="url(#av26)"><path d="M2 21 Q3 14.4 10 14.4 Q17 14.4 18 21 Z" fill="#d4e2f0"/><path d="M8.6 14.4 L10 21 L11.4 14.4 Z" fill="#2a2a2a"/><ellipse cx="10" cy="9.6" rx="3.8" ry="5" fill="#6f4a38"/><path d="M5.8 8 Q5.4 2.6 10 2.6 Q14.6 2.6 14.2 8 Q13 5.6 10 5.6 Q7 5.6 5.8 8 Z" fill="#1e1714"/></g></svg>
<div style="position:absolute;left:412.60px;top:562.92px;font-size:8.85px;line-height:10.62px;color:#474747;font-weight:normal;white-space:nowrap;-webkit-text-stroke:0.2px #474747;">Seòras Jagoda</div>
<div style="position:absolute;left:513.50px;top:562.90px;width:8.9px;height:8.9px;border:1.25px solid #ababab;border-radius:1.2px;background:#fff"></div>
<div style="position:absolute;left:548.85px;top:562.92px;font-size:8.85px;line-height:10.62px;color:#474747;font-weight:normal;white-space:nowrap;-webkit-text-stroke:0.2px #474747;">07/01</div>
<div style="position:absolute;left:606.26px;top:562.92px;font-size:8.85px;line-height:10.62px;color:#474747;font-weight:normal;white-space:nowrap;-webkit-text-stroke:0.2px #474747;">Closed</div>
<div style="position:absolute;left:683.80px;top:562.92px;font-size:8.85px;line-height:10.62px;color:#474747;font-weight:normal;white-space:nowrap;-webkit-text-stroke:0.2px #474747;">In-App</div>
<div style="position:absolute;left:759.36px;top:562.92px;font-size:8.85px;line-height:10.62px;color:#474747;font-weight:normal;white-space:nowrap;-webkit-text-stroke:0.2px #474747;">2 - High</div>
<svg style="position:absolute;left:842.60px;top:560.40px" width="16.40" height="16.40" viewBox="0 0 20 20"><defs><clipPath id="av27"><circle cx="10" cy="10" r="10"/></clipPath></defs><circle cx="10" cy="10" r="10" fill="#2597e0"/><g clip-path="url(#av27)"><path d="M2 21 Q3 13 9 13.4 Q17 13.6 18 21 Z" fill="#f2f5fa"/><ellipse cx="10.6" cy="8.8" rx="3.7" ry="4.8" fill="#e7b7a9" transform="rotate(20 10.6 8.8)"/><path d="M7.6 5 Q9 2.4 12 3 Q15 3.8 14.6 7 Q13 5.2 10.4 5 Z" fill="#3a3b44"/></g></svg>
<div style="position:absolute;left:864.86px;top:562.92px;font-size:8.85px;line-height:10.62px;color:#474747;font-weight:normal;white-space:nowrap;-webkit-text-stroke:0.2px #474747;">Cole Jeanes</div>
<div style="position:absolute;left:957.19px;top:562.92px;font-size:8.85px;line-height:10.62px;color:#474747;font-weight:normal;white-space:nowrap;-webkit-text-stroke:0.2px #474747;">Experience</div>
</div>
<div class="abs" style="left:982.8px;top:94px;width:6.6px;height:482px;background:#fafafa"></div>
<div class="abs" style="left:983.9px;top:98.6px;width:4.85px;height:227.4px;background:#c5c5c5;border-radius:2.4px"></div>
<div class="abs" style="left:990px;top:94px;width:34px;height:482px;background:#fff"></div>
<div class="abs" style="left:41px;top:0;width:983px;height:93.6px;background:#fff"></div>
<div class="abs" style="left:41px;top:31.8px;width:983px;height:1px;background:#f0f0f0"></div>
<svg class="abs" style="left:56.2px;top:11.2px" width="9.4" height="11.6" viewBox="0 0 9.4 11.6"><path d="M0 0.4 H9.2 V9.6 L8 8.6 L0 11.4 Z" fill="#153a6b"/><path d="M2.2 4.6 L4.2 7.2 L7.6 1.6" fill="none" stroke="#fff" stroke-width="1.3"/></svg>
<div style="position:absolute;left:69.97px;top:6.62px;font-size:15.4px;line-height:18.48px;color:#1f416f;font-weight:normal;white-space:nowrap;transform:scaleX(0.9258);transform-origin:0 0;-webkit-text-stroke:0.25px #1f416f;">smartsheet</div>
<div class="abs" style="left:859.3px;top:5.1px;width:154.2px;height:22.1px;border:1.4px solid #e7e7e7;border-radius:3px;background:#fff;box-sizing:border-box"></div>
<svg class="abs" style="left:865px;top:10.4px" width="11.6" height="11.2" viewBox="0 0 11.6 11.2"><circle cx="4.8" cy="4.6" r="3.7" fill="none" stroke="#8d8d8d" stroke-width="1.2"/><path d="M7.5 7.4 L10.4 10.2" stroke="#8d8d8d" stroke-width="1.3"/></svg>
<div style="position:absolute;left:879.90px;top:11.50px;font-size:9.3px;line-height:11.16px;color:#9a9a9a;font-weight:normal;white-space:nowrap;transform:scaleX(0.9574);transform-origin:0 0;-webkit-text-stroke:0.2px #9a9a9a;">Search</div>
<div style="position:absolute;left:55.54px;top:46.33px;font-size:10.0px;line-height:12.00px;color:#5a5a5a;font-weight:normal;white-space:nowrap;transform:scaleX(0.9562);transform-origin:0 0;-webkit-text-stroke:0.2px #5a5a5a;">File</div>
<div style="position:absolute;left:87.10px;top:46.33px;font-size:10.0px;line-height:12.00px;color:#5a5a5a;font-weight:normal;white-space:nowrap;transform:scaleX(0.9790);transform-origin:0 0;-webkit-text-stroke:0.2px #5a5a5a;">Automation</div>
<div style="position:absolute;left:151.78px;top:46.33px;font-size:10.0px;line-height:12.00px;color:#5a5a5a;font-weight:normal;white-space:nowrap;transform:scaleX(0.9007);transform-origin:0 0;-webkit-text-stroke:0.2px #5a5a5a;">Forms</div>
<div style="position:absolute;left:195.05px;top:46.33px;font-size:10.0px;line-height:12.00px;color:#5a5a5a;font-weight:normal;white-space:nowrap;transform:scaleX(0.9096);transform-origin:0 0;-webkit-text-stroke:0.2px #5a5a5a;">Connections</div>
<svg style="position:absolute;left:866.37px;top:41.12px" width="20.46" height="20.46" viewBox="-1 -1 22 22"><defs><clipPath id="av28"><circle cx="10" cy="10" r="10"/></clipPath></defs><circle cx="10" cy="10" r="10.9" fill="#fff"/><circle cx="10" cy="10" r="10" fill="#d17fbf"/><g clip-path="url(#av28)"><path d="M1 21 Q2 14 10 14 Q18 14 19 21 Z" fill="#2c2622"/><path d="M2 21 Q3 16 7 15 L9 21 Z" fill="#cfcfcf"/><ellipse cx="10" cy="9.4" rx="4.2" ry="5.2" fill="#cf9f86"/><path d="M5.4 7.2 Q5 2.6 10 2.6 Q15.2 2.6 14.8 7.6 Q13.4 5.6 10 5.8 Q6.8 5.8 5.4 7.2 Z" fill="#2a201c"/><path d="M6 10.4 Q6.6 15 10 15 Q13.6 15 14.2 10.4 Q12.6 12.2 10 12.2 Q7.6 12.2 6 10.4 Z" fill="#3a2c24"/><path d="M6 8.4 H14" stroke="#2a2a2a" stroke-width="0.9"/></g></svg>
<svg style="position:absolute;left:881.67px;top:41.12px" width="20.46" height="20.46" viewBox="-1 -1 22 22"><defs><clipPath id="av29"><circle cx="10" cy="10" r="10"/></clipPath></defs><circle cx="10" cy="10" r="10.9" fill="#fff"/><circle cx="10" cy="10" r="10" fill="#76b24c"/><g clip-path="url(#av29)"><path d="M3.6 20 Q3.4 8 5 5 Q7 2.2 10.2 2.2 Q13.8 2.2 15.4 5.6 Q16.8 9 16.4 20 Z" fill="#4b2f22"/><path d="M4 21 Q5 15.4 10 15.4 Q15 15.4 16 21 Z" fill="#8d8d8d"/><ellipse cx="10" cy="9.2" rx="3.9" ry="5.2" fill="#e8bba6"/></g></svg>
<svg style="position:absolute;left:897.07px;top:41.12px" width="20.46" height="20.46" viewBox="-1 -1 22 22"><defs><clipPath id="av30"><circle cx="10" cy="10" r="10"/></clipPath></defs><circle cx="10" cy="10" r="10.9" fill="#fff"/><circle cx="10" cy="10" r="10" fill="#efb21c"/><g clip-path="url(#av30)"><path d="M2 21 Q3 14.4 10 14.4 Q17 14.4 18 21 Z" fill="#d4e2f0"/><path d="M8.6 14.4 L10 21 L11.4 14.4 Z" fill="#2a2a2a"/><ellipse cx="10" cy="9.6" rx="3.8" ry="5" fill="#6f4a38"/><path d="M5.8 8 Q5.4 2.6 10 2.6 Q14.6 2.6 14.2 8 Q13 5.6 10 5.6 Q7 5.6 5.8 8 Z" fill="#1e1714"/></g></svg>
<div class="abs" style="left:912.0px;top:40.35px;width:22px;height:22px;border-radius:50%;background:#fff"></div>
<div class="abs" style="left:913.0px;top:41.35px;width:20px;height:20px;border-radius:50%;background:#e6e6e6"></div>
<div style="position:absolute;left:917.43px;top:47.07px;font-size:8.8px;line-height:10.56px;color:#2e2e2e;font-weight:bold;white-space:nowrap;transform:scaleX(1.0457);transform-origin:0 0;">+6</div>
<div class="abs" style="left:948.4px;top:38.8px;width:64.5px;height:25.3px;border-radius:2.6px;background:#088a8e"></div>
<svg class="abs" style="left:956.6px;top:46.2px" width="14.2" height="10.6" viewBox="0 0 14.2 10.6"><circle cx="5" cy="2.7" r="2.1" fill="none" stroke="#d6e4f0" stroke-width="1.1"/><path d="M0.8 10 Q1 6 5 6 Q9 6 9.2 10" fill="none" stroke="#d6e4f0" stroke-width="1.1"/><circle cx="9.8" cy="2.6" r="1.8" fill="none" stroke="#d6e4f0" stroke-width="1.1"/><path d="M10.6 5.6 Q13.2 6 13.4 9.4" fill="none" stroke="#d6e4f0" stroke-width="1.1"/></svg>
<div style="position:absolute;left:976.42px;top:46.61px;font-size:9.6px;line-height:11.52px;color:#e2ecf6;font-weight:bold;white-space:nowrap;transform:scaleX(0.9592);transform-origin:0 0;">Share</div>
<svg class="abs" style="left:55.90px;top:76.30px" width="11" height="11" viewBox="0 0 11 11"><path d="M0.6 0.6 H8.6 L10.4 2.4 V10.4 H0.6 Z" fill="none" stroke="#7a7a7a" stroke-width="1.15"/><path d="M2.8 0.6 V3.6 H7.6 V0.6 M2.4 10.4 V6.6 H8.6 V10.4" fill="none" stroke="#7a7a7a" stroke-width="1.15"/></svg>
<svg class="abs" style="left:77.80px;top:76.30px" width="11" height="11" viewBox="0 0 11 11"><path d="M2.6 3.6 V0.6 H8.4 V3.6 M2.6 8.2 H0.6 V3.8 H10.4 V8.2 H8.4" fill="none" stroke="#7a7a7a" stroke-width="1.15"/><path d="M2.6 6.4 H8.4 V10.4 H2.6 Z" fill="none" stroke="#7a7a7a" stroke-width="1.15"/></svg>
<svg class="abs" style="left:99.80px;top:76.60px" width="10.5" height="10" viewBox="0 0 10.5 10"><path d="M2.5 3.2 H6.3 A3.3 3.3 0 0 1 6.3 9.6 H4" fill="none" stroke="#7a7a7a" stroke-width="1.15"/><path d="M4.2 0.8 L1.6 3.2 L4.2 5.6" fill="none" stroke="#7a7a7a" stroke-width="1.15"/></svg>
<svg class="abs" style="left:121.50px;top:76.60px" width="10.5" height="10" viewBox="0 0 10.5 10"><path d="M8 3.2 H4.2 A3.3 3.3 0 0 0 4.2 9.6 H6.5" fill="none" stroke="#c9c9c9" stroke-width="1.1"/><path d="M6.3 0.8 L8.9 3.2 L6.3 5.6" fill="none" stroke="#c9c9c9" stroke-width="1.1"/></svg>
<div class="abs" style="left:139.10px;top:73.6px;width:1px;height:15.6px;background:#e4e4e4"></div>
<svg class="abs" style="left:149.60px;top:76.00px" width="10.6" height="10.8" viewBox="0 0 10.6 10.8"><rect x="0.6" y="0.6" width="9.4" height="9.6" fill="none" stroke="#7a7a7a" stroke-width="1.15"/><path d="M0.6 3.7 H10 M0.6 6.9 H10 M3.7 0.6 V10.2 M6.9 0.6 V10.2" fill="none" stroke="#7a7a7a" stroke-width="1.15"/></svg>
<div style="position:absolute;left:164.76px;top:76.99px;font-size:9.2px;line-height:11.04px;color:#585858;font-weight:bold;white-space:nowrap;transform:scaleX(0.9163);transform-origin:0 0;">Grid View</div>
<svg class="abs" style="left:216.40px;top:80.10px" width="4.4" height="2.8" viewBox="0 0 4.4 2.8"><path d="M0 0 H4.4 L2.2 2.8 Z" fill="#555"/></svg>
<svg class="abs" style="left:231.90px;top:76.00px" width="11.2" height="11.2" viewBox="0 0 11.2 11.2"><path d="M0.6 0.8 H10.6 L6.6 5.6 V10.4 L4.6 9.2 V5.6 Z" fill="none" stroke="#7a7a7a" stroke-width="1.15" stroke-linejoin="round"/></svg>
<div style="position:absolute;left:246.95px;top:76.99px;font-size:9.2px;line-height:11.04px;color:#585858;font-weight:bold;white-space:nowrap;transform:scaleX(0.9146);transform-origin:0 0;">Filter</div>
<svg class="abs" style="left:278.50px;top:80.10px" width="4.4" height="2.8" viewBox="0 0 4.4 2.8"><path d="M0 0 H4.4 L2.2 2.8 Z" fill="#555"/></svg>
<div class="abs" style="left:290.75px;top:73.6px;width:1px;height:15.6px;background:#e4e4e4"></div>
<svg class="abs" style="left:301.00px;top:76.80px" width="10.5" height="9.6" viewBox="0 0 10.5 9.6"><path d="M0.5 0.8 H10 M4 3.6 H10 M4 6 H10 M0.5 8.8 H10 M2.6 3.4 L0.8 4.8 L2.6 6.2" fill="none" stroke="#7a7a7a" stroke-width="1.15"/></svg>
<svg class="abs" style="left:323.00px;top:76.80px" width="10.5" height="9.6" viewBox="0 0 10.5 9.6"><path d="M0.5 0.8 H10 M0.5 3.6 H6.5 M0.5 6 H6.5 M0.5 8.8 H10 M7.9 3.4 L9.7 4.8 L7.9 6.2" fill="none" stroke="#7a7a7a" stroke-width="1.15"/></svg>
<div class="abs" style="left:341.50px;top:73.6px;width:1px;height:15.6px;background:#e4e4e4"></div>
<div style="position:absolute;left:354.03px;top:76.99px;font-size:9.2px;line-height:11.04px;color:#585858;font-weight:bold;white-space:nowrap;transform:scaleX(0.9465);transform-origin:0 0;">Inter</div>
<svg class="abs" style="left:385.70px;top:80.10px" width="4.4" height="2.8" viewBox="0 0 4.4 2.8"><path d="M0 0 H4.4 L2.2 2.8 Z" fill="#555"/></svg>
<div style="position:absolute;left:406.88px;top:76.99px;font-size:9.2px;line-height:11.04px;color:#585858;font-weight:bold;white-space:nowrap;transform:scaleX(0.9424);transform-origin:0 0;">13</div>
<svg class="abs" style="left:428.20px;top:80.10px" width="4.4" height="2.8" viewBox="0 0 4.4 2.8"><path d="M0 0 H4.4 L2.2 2.8 Z" fill="#555"/></svg>
<div class="abs" style="left:444.50px;top:73.6px;width:1px;height:15.6px;background:#e4e4e4"></div>
<div style="position:absolute;left:454.77px;top:75.21px;font-size:11.4px;line-height:13.68px;color:#6a6a6a;font-weight:bold;white-space:nowrap;transform:scaleX(1.1217);transform-origin:0 0;">B</div>
<svg class="abs" style="left:477.50px;top:76.60px" width="7" height="10" viewBox="0 0 7 10"><path d="M2 0.6 H6.6 M0.4 9.4 H5 M4.3 0.6 L2.7 9.4" fill="none" stroke="#7a7a7a" stroke-width="1.15"/></svg>
<svg class="abs" style="left:498.60px;top:76.60px" width="9.6" height="11" viewBox="0 0 9.6 11"><path d="M2 0.5 V5.2 A2.8 2.8 0 0 0 7.6 5.2 V0.5 M0.6 10.2 H9" fill="none" stroke="#7a7a7a" stroke-width="1.15"/></svg>
<svg class="abs" style="left:519.70px;top:76.60px" width="10" height="10.6" viewBox="0 0 10 10.6"><path d="M7.6 2 Q6.6 0.6 5 0.6 Q2.4 0.6 2.4 2.8 Q2.4 4.6 5 5 Q7.8 5.6 7.8 7.6 Q7.8 9.9 5 9.9 Q3.2 9.9 2.2 8.4 M0.4 5.2 H9.6" fill="none" stroke="#7a7a7a" stroke-width="1.15"/></svg>
<svg class="abs" style="left:540.70px;top:75.80px" width="12.6" height="11" viewBox="0 0 12.6 11"><path d="M1.2 5.4 L5 1.6 L9 5.6 L5.4 9.2 Z M0.6 5.6 H9" fill="none" stroke="#7a7a7a" stroke-width="1.15"/><circle cx="10.6" cy="8" r="1.2" fill="none" stroke="#7a7a7a" stroke-width="1"/></svg>
<div class="abs" style="left:541px;top:86.8px;width:11.8px;height:1.9px;background:#5bc1de"></div>
<svg class="abs" style="left:560.00px;top:80.10px" width="4.4" height="2.8" viewBox="0 0 4.4 2.8"><path d="M0 0 H4.4 L2.2 2.8 Z" fill="#555"/></svg>
<svg class="abs" style="left:571.40px;top:75.80px" width="12" height="10.4" viewBox="0 0 12 10.4"><path d="M1.2 10 L6 0.8 L10.8 10 M2.9 6.8 H9.1" fill="none" stroke="#7a7a7a" stroke-width="1.15"/></svg>
<div class="abs" style="left:571px;top:87.4px;width:12.8px;height:2.1px;background:#2b2420"></div>
<svg class="abs" style="left:589.80px;top:80.10px" width="4.4" height="2.8" viewBox="0 0 4.4 2.8"><path d="M0 0 H4.4 L2.2 2.8 Z" fill="#555"/></svg>
<div class="abs" style="left:600.80px;top:73.6px;width:1px;height:15.6px;background:#e4e4e4"></div>
<svg class="abs" style="left:611.00px;top:76.80px" width="10" height="10" viewBox="0 0 10 10"><path d="M0.5 0.8 H9.8 M0.5 3.6 H6.5 M0.5 6.4 H9.8 M0.5 9.2 H6.5" fill="none" stroke="#7a7a7a" stroke-width="1.15"/></svg>
<svg class="abs" style="left:629.40px;top:80.10px" width="4.4" height="2.8" viewBox="0 0 4.4 2.8"><path d="M0 0 H4.4 L2.2 2.8 Z" fill="#555"/></svg>
<svg class="abs" style="left:642.30px;top:76.60px" width="11" height="10.4" viewBox="0 0 11 10.4"><path d="M0.5 0.8 H10.5 M0.5 3.6 H10.5 M0.5 6.4 H6 M0.5 9.2 H5 M7 6.4 H9 A1.4 1.4 0 0 1 9 9.2 H7.6" fill="none" stroke="#7a7a7a" stroke-width="1.15"/></svg>
<svg class="abs" style="left:664.40px;top:76.00px" width="10.6" height="11" viewBox="0 0 10.6 11"><path d="M4 9.8 L0.8 6.6 L6.4 1 L9.6 4.2 Z M2.6 4.8 L5.8 8 M4 9.8 H10" fill="none" stroke="#7a7a7a" stroke-width="1.15"/></svg>
<svg class="abs" style="left:685.30px;top:75.80px" width="11" height="12" viewBox="0 0 11 12"><path d="M0.6 0.6 H9.4 V3.6 H0.6 Z M9.4 2 H10.4 V5.6 H5 V7.6 M4.2 7.6 H5.8 V11.4 H4.2 Z" fill="none" stroke="#7a7a7a" stroke-width="1.15"/></svg>
<div class="abs" style="left:704.90px;top:73.6px;width:1px;height:15.6px;background:#e4e4e4"></div>
<svg class="abs" style="left:714.60px;top:76.20px" width="11" height="11" viewBox="0 0 11 11"><rect x="0.6" y="0.6" width="9.8" height="9.8" fill="none" stroke="#7a7a7a" stroke-width="1.15"/><rect x="4" y="3.8" width="6.4" height="3" fill="#7a7a7a"/><path d="M0.6 3.8 H10.4 M0.6 6.8 H10.4" fill="none" stroke="#7a7a7a" stroke-width="1.15"/><rect x="0.6" y="6.8" width="3.4" height="3.6" fill="#7a7a7a"/></svg>
<svg class="abs" style="left:736.00px;top:75.60px" width="12" height="11" viewBox="0 0 12 11"><path d="M2.2 8.2 L1.6 10.4 L4 9.8 L10.4 3.4 L8.6 1.6 Z" fill="none" stroke="#7a7a7a" stroke-width="1.15" stroke-linejoin="round"/></svg>
<div class="abs" style="left:736px;top:88.2px;width:12px;height:1.6px;background:#f0c23a"></div>
<div class="abs" style="left:756.10px;top:73.6px;width:1px;height:15.6px;background:#e4e4e4"></div>
<svg class="abs" style="left:765.40px;top:78.40px" width="11.6" height="6.4" viewBox="0 0 11.6 6.4"><path d="M4.4 0.6 H3 A2.6 2.6 0 0 0 3 5.8 H4.4 M7.2 0.6 H8.6 A2.6 2.6 0 0 1 8.6 5.8 H7.2 M3.6 3.2 H8" fill="none" stroke="#7a7a7a" stroke-width="1.15"/></svg>
<svg class="abs" style="left:787.50px;top:76.30px" width="10.8" height="10.8" viewBox="0 0 10.8 10.8"><rect x="0.6" y="0.6" width="9.6" height="9.6" fill="none" stroke="#7a7a7a" stroke-width="1.15"/><path d="M0.6 8.4 L3.6 5 L6 7.2 L7.6 5.8 L10.2 8.4" fill="none" stroke="#7a7a7a" stroke-width="1.15"/><circle cx="7.2" cy="3.2" r="0.9" fill="#7a7a7a"/></svg>
<svg class="abs" style="left:809.40px;top:76.20px" width="10.6" height="11" viewBox="0 0 10.6 11"><path d="M0.6 0.4 V2.8 M0.6 8 V10.6" fill="none" stroke="#7a7a7a" stroke-width="1.15"/><rect x="3.6" y="1" width="6.4" height="3" rx="0.6" fill="none" stroke="#7a7a7a" stroke-width="1.15"/><rect x="0.6" y="5.8" width="6.4" height="3.4" rx="0.6" fill="none" stroke="#7a7a7a" stroke-width="1.15"/></svg>
<svg class="abs" style="left:831.80px;top:75.80px" width="9.6" height="12" viewBox="0 0 9.6 12"><rect x="0.6" y="1" width="3.2" height="6.6" rx="0.6" fill="none" stroke="#7a7a7a" stroke-width="1.15"/><rect x="5.6" y="3.8" width="3.2" height="7.4" rx="0.6" fill="none" stroke="#7a7a7a" stroke-width="1.15"/><path d="M7.2 0.4 V2.2" fill="none" stroke="#7a7a7a" stroke-width="1.15"/></svg>
<div class="abs" style="left:850.30px;top:73.6px;width:1px;height:15.6px;background:#e4e4e4"></div>
<div class="abs" style="left:856.50px;top:80.40px;width:2.2px;height:2.2px;border-radius:50%;background:#555"></div>
<div class="abs" style="left:860.80px;top:80.40px;width:2.2px;height:2.2px;border-radius:50%;background:#555"></div>
<div class="abs" style="left:865.10px;top:80.40px;width:2.2px;height:2.2px;border-radius:50%;background:#555"></div>
<svg class="abs" style="left:995.00px;top:78.60px" width="8.6" height="5" viewBox="0 0 8.6 5"><path d="M0.6 4.4 L4.3 0.8 L8 4.4" fill="none" stroke="#777" stroke-width="1.2"/></svg>
<svg class="abs" style="left:999.70px;top:104.60px" width="13.2" height="12" viewBox="0 0 13.2 12"><path d="M0.8 0.8 H12.4 V8.6 H4.6 L3 10.6 V8.6 H0.8 Z" fill="none" stroke="#3a3a3a" stroke-width="1.2" stroke-linejoin="round"/></svg>
<svg class="abs" style="left:999.30px;top:134.20px" width="14" height="14" viewBox="0 0 14 14"><g transform="rotate(-45 7 7)"><rect x="0.6" y="4.7" width="8" height="4.6" rx="2.3" fill="none" stroke="#3a3a3a" stroke-width="1.2"/><rect x="5.4" y="4.7" width="8" height="4.6" rx="2.3" fill="none" stroke="#3a3a3a" stroke-width="1.2"/></g></svg>
<svg class="abs" style="left:1000.30px;top:166.50px" width="12" height="13" viewBox="0 0 12 13"><path d="M2.6 0.8 H9.4 M1.8 2.6 H10.2" fill="none" stroke="#3a3a3a" stroke-width="1.2"/><path d="M0.8 4.4 H11.2 V9.2 L9.4 11.2 H0.8 Z M9.4 11.2 V9.2 H11.2" fill="none" stroke="#3a3a3a" stroke-width="1.2"/></svg>
<svg class="abs" style="left:999.70px;top:197.20px" width="12.8" height="12.2" viewBox="0 0 12.8 12.2"><path d="M11.9 8.4 V0.9 H0.9 V11.3 H8.8" fill="none" stroke="#2e2a28" stroke-width="1.8"/><path d="M10.2 9.8 L11.9 11.5 M11.9 9.6 V11.5 H10" fill="none" stroke="#2e2a28" stroke-width="1.1"/><rect x="3.3" y="2.9" width="5.8" height="6.4" fill="none" stroke="#bbb" stroke-width="0.6"/><text x="6.2" y="8.5" font-size="6.8" font-weight="bold" text-anchor="middle" fill="#2e2a28" font-family="Liberation Sans">B</text></svg>
<svg class="abs" style="left:1000.30px;top:227.40px" width="12" height="12" viewBox="0 0 12 12"><path d="M10.2 4 A4.6 4.6 0 0 0 2.2 2.8 M1.8 8 A4.6 4.6 0 0 0 9.8 9.2" fill="none" stroke="#3a3a3a" stroke-width="1.2"/><path d="M1.6 0.8 V3.4 H4" fill="none" stroke="#3a3a3a" stroke-width="1.2"/><path d="M10.4 11.2 V8.6 H8" fill="none" stroke="#3a3a3a" stroke-width="1.2"/><path d="M3.8 6 L5.4 7.4 L8.2 4.6" fill="none" stroke="#3a3a3a" stroke-width="1.2"/></svg>
<svg class="abs" style="left:1001.30px;top:258.00px" width="10" height="13" viewBox="0 0 10 13"><path d="M0.8 0.8 H6.4 L9.2 3.6 V12.2 H0.8 Z M6.4 0.8 V3.6 H9.2" fill="none" stroke="#3a3a3a" stroke-width="1.2"/><path d="M5 10 V5.8 M3 7.6 L5 5.6 L7 7.6" fill="none" stroke="#3a3a3a" stroke-width="1.2"/></svg>
<svg class="abs" style="left:1000.10px;top:288.40px" width="12.4" height="12.4" viewBox="0 0 12.4 12.4"><circle cx="6.2" cy="6.2" r="5.4" fill="none" stroke="#3a3a3a" stroke-width="1.2"/><path d="M2.8 6.6 L4.6 6.6 L5.6 4.6 L6.8 8 L7.8 6 L9.6 6" fill="none" stroke="#3a3a3a" stroke-width="1.2"/></svg>
<svg class="abs" style="left:1000.30px;top:318.40px" width="12" height="13" viewBox="0 0 12 13"><path d="M3.6 0.8 H11.2 V9.2 L8.6 11.8 H3.6 Z M8.6 11.8 V9.2 H11.2" fill="none" stroke="#3a3a3a" stroke-width="1.2"/><path d="M3.6 2.4 H0.8 V10.4 H3.6" fill="none" stroke="#3a3a3a" stroke-width="1.2"/><path d="M2.2 4.6 V5.4 M2.2 7 V7.8" fill="none" stroke="#3a3a3a" stroke-width="1.2"/></svg>
<svg class="abs" style="left:999.90px;top:349.00px" width="12.8" height="12" viewBox="0 0 12.8 12"><circle cx="3.2" cy="2.8" r="2" fill="none" stroke="#3a3a3a" stroke-width="1.2"/><path d="M0.8 11 Q0.8 6.6 4 6.4" fill="none" stroke="#3a3a3a" stroke-width="1.2"/><rect x="6.2" y="1.8" width="5.8" height="2.4" rx="1.2" fill="none" stroke="#3a3a3a" stroke-width="1.2"/><rect x="6.2" y="6.6" width="5.8" height="2.4" rx="1.2" fill="none" stroke="#3a3a3a" stroke-width="1.2"/></svg>
<svg class="abs" style="left:1000.10px;top:379.60px" width="12.4" height="12.4" viewBox="0 0 12.4 12.4"><rect x="0.8" y="0.8" width="10.8" height="10.8" fill="none" stroke="#3a3a3a" stroke-width="1.2"/><path d="M3.2 9.4 V6.4 M4.8 9.4 V4.2 M6.4 9.4 V5.4 M8 9.4 V7 M2.4 9.4 H9.8" fill="none" stroke="#3a3a3a" stroke-width="1"/></svg>
<div class="abs" style="left:0;top:0;width:41px;height:576px;background:#033768"></div>
<div class="abs" style="left:39.8px;top:0;width:1.2px;height:576px;background:#022e58"></div>
<svg class="abs" style="left:14.20px;top:12.20px" width="12.6" height="12.4" viewBox="0 0 12.6 12.4"><path d="M0.8 5.4 L6.3 0.9 L11.8 5.4 V11.6 H0.8 Z" fill="none" stroke="#9ab9d3" stroke-width="1.55" stroke-linejoin="round"/></svg>
<svg class="abs" style="left:14.40px;top:47.00px" width="12.2" height="14.2" viewBox="0 0 12.2 14.2"><path d="M0.8 11 Q2.4 9.6 2.4 6.6 Q2.4 2 6.1 2 Q9.8 2 9.8 6.6 Q9.8 9.6 11.4 11 Z" fill="none" stroke="#9ab9d3" stroke-width="1.55" stroke-linejoin="round"/><path d="M4.6 12.8 H7.6" fill="none" stroke="#9ab9d3" stroke-width="1.55"/></svg>
<div class="abs" style="left:23.4px;top:42.2px;width:9.4px;height:9.4px;border-radius:50%;background:#d9782e"></div>
<div class="abs" style="left:27.4px;top:44.4px;width:2.2px;height:5px;background:#f1b9a6;border-radius:0 2px 2px 0"></div>
<svg class="abs" style="left:13.40px;top:84.00px" width="14.4" height="12" viewBox="0 0 14.4 12"><path d="M0.8 0.8 H5.4 L6.8 2.6 H13.6 V11.2 H0.8 Z" fill="none" stroke="#9ab9d3" stroke-width="1.55" stroke-linejoin="round"/></svg>
<svg class="abs" style="left:13.50px;top:118.90px" width="14" height="14" viewBox="0 0 14 14"><circle cx="7" cy="7" r="6.2" fill="none" stroke="#9ab9d3" stroke-width="1.55"/><path d="M6.6 3.4 V7.2 L9.2 9" fill="none" stroke="#9ab9d3" stroke-width="1.55"/></svg>
<svg class="abs" style="left:13.60px;top:155.20px" width="13.8" height="13.2" viewBox="0 0 13.8 13.2"><path d="M6.9 0.9 L8.6 4.6 L12.7 5 L9.6 7.7 L10.5 11.9 L6.9 9.7 L3.3 11.9 L4.2 7.7 L1.1 5 L5.2 4.6 Z" fill="none" stroke="#9ab9d3" stroke-width="1.55" stroke-linejoin="round"/></svg>
<svg class="abs" style="left:13.60px;top:191.20px" width="13.6" height="13.6" viewBox="0 0 13.6 13.6"><circle cx="6.8" cy="3" r="2" fill="none" stroke="#9ab9d3" stroke-width="1.55"/><circle cx="6.8" cy="10.6" r="2" fill="none" stroke="#9ab9d3" stroke-width="1.55"/><circle cx="3" cy="6.8" r="2" fill="none" stroke="#9ab9d3" stroke-width="1.55"/><circle cx="10.6" cy="6.8" r="2" fill="none" stroke="#9ab9d3" stroke-width="1.55"/></svg>
<svg class="abs" style="left:14.60px;top:228.60px" width="11.4" height="11.4" viewBox="0 0 11.4 11.4"><path d="M5.7 0.4 V11 M0.4 5.7 H11" fill="none" stroke="#9ab9d3" stroke-width="1.6"/></svg>
<div class="abs" style="left:13.80px;top:477.80px;width:3.5px;height:3.5px;background:#c4d6e6;border-radius:0.8px"></div>
<div class="abs" style="left:18.55px;top:477.80px;width:3.5px;height:3.5px;background:#c4d6e6;border-radius:0.8px"></div>
<div class="abs" style="left:23.30px;top:477.80px;width:3.5px;height:3.5px;background:#c4d6e6;border-radius:0.8px"></div>
<div class="abs" style="left:13.80px;top:482.55px;width:3.5px;height:3.5px;background:#c4d6e6;border-radius:0.8px"></div>
<div class="abs" style="left:18.55px;top:482.55px;width:3.5px;height:3.5px;background:#c4d6e6;border-radius:0.8px"></div>
<div class="abs" style="left:23.30px;top:482.55px;width:3.5px;height:3.5px;background:#c4d6e6;border-radius:0.8px"></div>
<div class="abs" style="left:13.80px;top:487.30px;width:3.5px;height:3.5px;background:#c4d6e6;border-radius:0.8px"></div>
<div class="abs" style="left:18.55px;top:487.30px;width:3.5px;height:3.5px;background:#c4d6e6;border-radius:0.8px"></div>
<div class="abs" style="left:23.30px;top:487.30px;width:3.5px;height:3.5px;background:#c4d6e6;border-radius:0.8px"></div>
<svg class="abs" style="left:13.40px;top:513.60px" width="13.4" height="13.4" viewBox="0 0 13.4 13.4"><circle cx="6.7" cy="6.7" r="5.9" fill="none" stroke="#9ab9d3" stroke-width="1.55"/><text x="6.8" y="10.0" font-size="9.6" text-anchor="middle" fill="#9ab9d3" font-family="Liberation Sans" font-weight="bold">?</text></svg>
<div class="abs" style="left:10.2px;top:545.8px;width:20.6px;height:20.6px;border-radius:50%;background:#58b3b8"></div>
<svg style="position:absolute;left:11.40px;top:547.00px" width="18.20" height="18.20" viewBox="0 0 20 20"><defs><clipPath id="av31"><circle cx="10" cy="10" r="10"/></clipPath></defs><circle cx="10" cy="10" r="10" fill="#6a9fd0"/><g clip-path="url(#av31)"><path d="M4 20 Q3.4 9 5.4 5 Q7.4 2.2 10.6 2.4 Q14.6 2.8 15.8 6.6 Q17 11 16.2 20 Z" fill="#5a3e2e"/><path d="M3 21 Q4 15.6 9.6 15.6 Q15 15.6 16 21 Z" fill="#3d4f66"/><ellipse cx="9.2" cy="9.6" rx="3.8" ry="5" fill="#e3b29a"/></g></svg>
<div class="abs" style="left:0;top:0;width:1024px;height:1px;background:rgba(0,0,0,0.33)"></div>
<div class="abs" style="left:1022.8px;top:0;width:1.2px;height:576px;background:#444"></div>
</div></body></html>
